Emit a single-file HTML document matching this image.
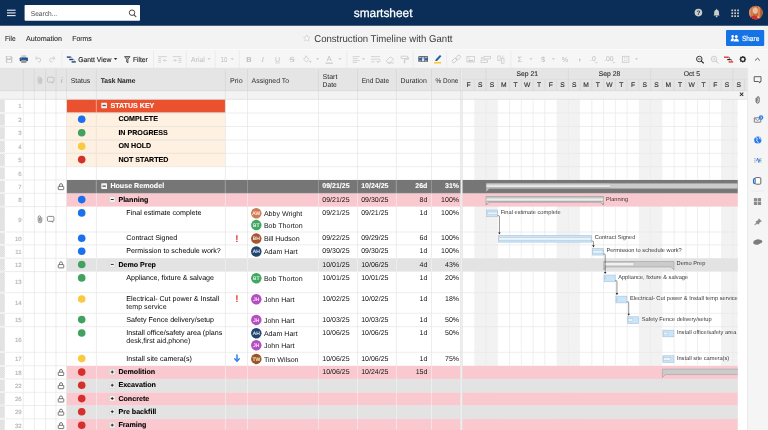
<!DOCTYPE html>
<html lang="en"><head><meta charset="utf-8"><title>Construction Timeline with Gantt - Smartsheet</title>
<style>html,body{margin:0;padding:0;background:#fff;overflow:hidden}body{width:768px;height:430px;font-family:"Liberation Sans",sans-serif}</style>
</head><body>
<svg width="768" height="430" viewBox="0 0 768 430" font-family="'Liberation Sans',sans-serif" text-rendering="geometricPrecision" style="display:block;will-change:transform;opacity:0.9999">
<rect x="0.00" y="0.00" width="768.00" height="430.00" fill="#fff" />
<rect x="0.00" y="25.60" width="768.00" height="24.00" fill="#f3f3f3" />
<rect x="0.00" y="0.00" width="768.00" height="25.75" fill="#0b2e59" />
<rect x="0.00" y="49.60" width="768.00" height="18.70" fill="#f6f6f6" />
<line x1="0.00" y1="49.60" x2="768.00" y2="49.60" stroke="#fbfbfb" stroke-width="0.8" />
<rect x="0.00" y="68.30" width="747.60" height="22.40" fill="#e5e5e5" />
<rect x="0.00" y="90.70" width="747.60" height="8.60" fill="#f3f3f3" />
<rect x="747.60" y="68.30" width="20.40" height="361.70" fill="#f5f5f5" />
<rect x="737.70" y="99.30" width="9.90" height="330.70" fill="#fff" />
<rect x="474.35" y="99.30" width="11.75" height="330.70" fill="#f2f2f2" />
<rect x="486.10" y="99.30" width="11.75" height="330.70" fill="#f2f2f2" />
<rect x="556.60" y="99.30" width="11.75" height="330.70" fill="#f2f2f2" />
<rect x="568.35" y="99.30" width="11.75" height="330.70" fill="#f2f2f2" />
<rect x="638.85" y="99.30" width="11.75" height="330.70" fill="#f2f2f2" />
<rect x="650.60" y="99.30" width="11.75" height="330.70" fill="#f2f2f2" />
<rect x="721.10" y="99.30" width="11.75" height="330.70" fill="#f2f2f2" />
<rect x="732.85" y="99.30" width="4.85" height="330.70" fill="#f2f2f2" />
<rect x="66.50" y="99.30" width="158.90" height="13.70" fill="#e9512f" />
<rect x="66.50" y="113.00" width="158.90" height="53.70" fill="#fef1e1" />
<rect x="66.50" y="179.95" width="671.20" height="13.35" fill="#767676" />
<rect x="66.50" y="193.30" width="671.20" height="13.30" fill="#f9c9cf" />
<rect x="66.50" y="258.20" width="671.20" height="13.40" fill="#e3e3e3" />
<rect x="66.50" y="365.80" width="671.20" height="13.20" fill="#f9c9cf" />
<rect x="66.50" y="379.00" width="671.20" height="13.30" fill="#e3e3e3" />
<rect x="66.50" y="392.30" width="671.20" height="13.20" fill="#f9c9cf" />
<rect x="66.50" y="405.50" width="671.20" height="13.40" fill="#e3e3e3" />
<rect x="66.50" y="418.90" width="671.20" height="13.40" fill="#f9c9cf" />
<defs><pattern id="ht" width="1.6" height="1.6" patternUnits="userSpaceOnUse" patternTransform="rotate(45)"><rect width="1.6" height="1.6" fill="#e9e9e9"/><rect width="0.8" height="1.6" fill="#dcdcdc"/></pattern></defs>
<rect x="0.00" y="100.00" width="4.80" height="12.20" fill="url(#ht)" />
<rect x="0.00" y="113.70" width="4.80" height="12.00" fill="url(#ht)" />
<rect x="0.00" y="127.20" width="4.80" height="12.00" fill="url(#ht)" />
<rect x="0.00" y="140.70" width="4.80" height="11.80" fill="url(#ht)" />
<rect x="0.00" y="154.00" width="4.80" height="11.90" fill="url(#ht)" />
<rect x="0.00" y="167.40" width="4.80" height="11.75" fill="url(#ht)" />
<rect x="0.00" y="180.65" width="4.80" height="11.85" fill="url(#ht)" />
<rect x="0.00" y="194.00" width="4.80" height="11.80" fill="url(#ht)" />
<rect x="0.00" y="207.30" width="4.80" height="23.90" fill="url(#ht)" />
<rect x="0.00" y="232.70" width="4.80" height="11.40" fill="url(#ht)" />
<rect x="0.00" y="245.60" width="4.80" height="11.80" fill="url(#ht)" />
<rect x="0.00" y="258.90" width="4.80" height="11.90" fill="url(#ht)" />
<rect x="0.00" y="272.30" width="4.80" height="19.60" fill="url(#ht)" />
<rect x="0.00" y="293.40" width="4.80" height="19.10" fill="url(#ht)" />
<rect x="0.00" y="314.00" width="4.80" height="11.90" fill="url(#ht)" />
<rect x="0.00" y="327.40" width="4.80" height="24.10" fill="url(#ht)" />
<rect x="0.00" y="353.00" width="4.80" height="12.00" fill="url(#ht)" />
<rect x="0.00" y="366.50" width="4.80" height="11.70" fill="url(#ht)" />
<rect x="0.00" y="379.70" width="4.80" height="11.80" fill="url(#ht)" />
<rect x="0.00" y="393.00" width="4.80" height="11.70" fill="url(#ht)" />
<rect x="0.00" y="406.20" width="4.80" height="11.90" fill="url(#ht)" />
<rect x="0.00" y="419.60" width="4.80" height="11.90" fill="url(#ht)" />
<line x1="0.00" y1="113.00" x2="737.70" y2="113.00" stroke="#e7e7e7" stroke-width="0.75" />
<line x1="0.00" y1="126.50" x2="737.70" y2="126.50" stroke="#e7e7e7" stroke-width="0.75" />
<line x1="0.00" y1="140.00" x2="737.70" y2="140.00" stroke="#e7e7e7" stroke-width="0.75" />
<line x1="0.00" y1="153.30" x2="737.70" y2="153.30" stroke="#e7e7e7" stroke-width="0.75" />
<line x1="0.00" y1="166.70" x2="737.70" y2="166.70" stroke="#e7e7e7" stroke-width="0.75" />
<line x1="0.00" y1="179.95" x2="66.50" y2="179.95" stroke="#e7e7e7" stroke-width="0.75" />
<line x1="0.00" y1="193.30" x2="66.50" y2="193.30" stroke="#e7e7e7" stroke-width="0.75" />
<line x1="66.50" y1="193.30" x2="737.70" y2="193.30" stroke="#a9a0a2" stroke-width="0.5" />
<line x1="0.00" y1="206.60" x2="66.50" y2="206.60" stroke="#e7e7e7" stroke-width="0.75" />
<line x1="0.00" y1="232.00" x2="737.70" y2="232.00" stroke="#e7e7e7" stroke-width="0.75" />
<line x1="0.00" y1="244.90" x2="737.70" y2="244.90" stroke="#e7e7e7" stroke-width="0.75" />
<line x1="0.00" y1="258.20" x2="66.50" y2="258.20" stroke="#e7e7e7" stroke-width="0.75" />
<line x1="0.00" y1="271.60" x2="66.50" y2="271.60" stroke="#e7e7e7" stroke-width="0.75" />
<line x1="0.00" y1="292.70" x2="737.70" y2="292.70" stroke="#e7e7e7" stroke-width="0.75" />
<line x1="0.00" y1="313.30" x2="737.70" y2="313.30" stroke="#e7e7e7" stroke-width="0.75" />
<line x1="0.00" y1="326.70" x2="737.70" y2="326.70" stroke="#e7e7e7" stroke-width="0.75" />
<line x1="0.00" y1="352.30" x2="737.70" y2="352.30" stroke="#e7e7e7" stroke-width="0.75" />
<line x1="0.00" y1="365.80" x2="66.50" y2="365.80" stroke="#e7e7e7" stroke-width="0.75" />
<line x1="0.00" y1="379.00" x2="66.50" y2="379.00" stroke="#e7e7e7" stroke-width="0.75" />
<line x1="66.50" y1="379.00" x2="737.70" y2="379.00" stroke="#efd9dc" stroke-width="0.5" />
<line x1="0.00" y1="392.30" x2="66.50" y2="392.30" stroke="#e7e7e7" stroke-width="0.75" />
<line x1="66.50" y1="392.30" x2="737.70" y2="392.30" stroke="#ecdfe1" stroke-width="0.5" />
<line x1="0.00" y1="405.50" x2="66.50" y2="405.50" stroke="#e7e7e7" stroke-width="0.75" />
<line x1="66.50" y1="405.50" x2="737.70" y2="405.50" stroke="#efd9dc" stroke-width="0.5" />
<line x1="0.00" y1="418.90" x2="66.50" y2="418.90" stroke="#e7e7e7" stroke-width="0.75" />
<line x1="66.50" y1="418.90" x2="737.70" y2="418.90" stroke="#ecdfe1" stroke-width="0.5" />
<line x1="0.00" y1="432.30" x2="66.50" y2="432.30" stroke="#e7e7e7" stroke-width="0.75" />
<line x1="23.20" y1="69.30" x2="23.20" y2="90.70" stroke="#d6d6d6" stroke-width="0.8" />
<line x1="23.20" y1="90.70" x2="23.20" y2="99.30" stroke="#e2e2e2" stroke-width="0.9" />
<line x1="23.20" y1="99.30" x2="23.20" y2="430.00" stroke="#e7e7e7" stroke-width="0.75" />
<line x1="34.30" y1="69.30" x2="34.30" y2="90.70" stroke="#d6d6d6" stroke-width="0.8" />
<line x1="34.30" y1="90.70" x2="34.30" y2="99.30" stroke="#e2e2e2" stroke-width="0.9" />
<line x1="34.30" y1="99.30" x2="34.30" y2="430.00" stroke="#e7e7e7" stroke-width="0.75" />
<line x1="45.60" y1="69.30" x2="45.60" y2="90.70" stroke="#d6d6d6" stroke-width="0.8" />
<line x1="45.60" y1="90.70" x2="45.60" y2="99.30" stroke="#e2e2e2" stroke-width="0.9" />
<line x1="45.60" y1="99.30" x2="45.60" y2="430.00" stroke="#e7e7e7" stroke-width="0.75" />
<line x1="56.00" y1="69.30" x2="56.00" y2="90.70" stroke="#d6d6d6" stroke-width="0.8" />
<line x1="56.00" y1="90.70" x2="56.00" y2="99.30" stroke="#e2e2e2" stroke-width="0.9" />
<line x1="56.00" y1="99.30" x2="56.00" y2="430.00" stroke="#e7e7e7" stroke-width="0.75" />
<line x1="66.50" y1="69.30" x2="66.50" y2="90.70" stroke="#d6d6d6" stroke-width="0.8" />
<line x1="66.50" y1="90.70" x2="66.50" y2="99.30" stroke="#e2e2e2" stroke-width="0.9" />
<line x1="66.50" y1="99.30" x2="66.50" y2="430.00" stroke="#e7e7e7" stroke-width="0.75" />
<line x1="96.40" y1="69.30" x2="96.40" y2="90.70" stroke="#d6d6d6" stroke-width="0.8" />
<line x1="96.40" y1="90.70" x2="96.40" y2="99.30" stroke="#e2e2e2" stroke-width="0.9" />
<line x1="96.40" y1="99.30" x2="96.40" y2="430.00" stroke="#e7e7e7" stroke-width="0.75" />
<line x1="225.40" y1="69.30" x2="225.40" y2="90.70" stroke="#d6d6d6" stroke-width="0.8" />
<line x1="225.40" y1="90.70" x2="225.40" y2="99.30" stroke="#e2e2e2" stroke-width="0.9" />
<line x1="225.40" y1="99.30" x2="225.40" y2="430.00" stroke="#e7e7e7" stroke-width="0.75" />
<line x1="247.50" y1="69.30" x2="247.50" y2="90.70" stroke="#d6d6d6" stroke-width="0.8" />
<line x1="247.50" y1="90.70" x2="247.50" y2="99.30" stroke="#e2e2e2" stroke-width="0.9" />
<line x1="247.50" y1="99.30" x2="247.50" y2="430.00" stroke="#e7e7e7" stroke-width="0.75" />
<line x1="318.50" y1="69.30" x2="318.50" y2="90.70" stroke="#d6d6d6" stroke-width="0.8" />
<line x1="318.50" y1="90.70" x2="318.50" y2="99.30" stroke="#e2e2e2" stroke-width="0.9" />
<line x1="318.50" y1="99.30" x2="318.50" y2="430.00" stroke="#e7e7e7" stroke-width="0.75" />
<line x1="357.50" y1="69.30" x2="357.50" y2="90.70" stroke="#d6d6d6" stroke-width="0.8" />
<line x1="357.50" y1="90.70" x2="357.50" y2="99.30" stroke="#e2e2e2" stroke-width="0.9" />
<line x1="357.50" y1="99.30" x2="357.50" y2="430.00" stroke="#e7e7e7" stroke-width="0.75" />
<line x1="396.40" y1="69.30" x2="396.40" y2="90.70" stroke="#d6d6d6" stroke-width="0.8" />
<line x1="396.40" y1="90.70" x2="396.40" y2="99.30" stroke="#e2e2e2" stroke-width="0.9" />
<line x1="396.40" y1="99.30" x2="396.40" y2="430.00" stroke="#e7e7e7" stroke-width="0.75" />
<line x1="431.50" y1="69.30" x2="431.50" y2="90.70" stroke="#d6d6d6" stroke-width="0.8" />
<line x1="431.50" y1="90.70" x2="431.50" y2="99.30" stroke="#e2e2e2" stroke-width="0.9" />
<line x1="431.50" y1="99.30" x2="431.50" y2="430.00" stroke="#e7e7e7" stroke-width="0.75" />
<line x1="460.60" y1="69.30" x2="460.60" y2="90.70" stroke="#d6d6d6" stroke-width="0.8" />
<line x1="460.60" y1="90.70" x2="460.60" y2="99.30" stroke="#e2e2e2" stroke-width="0.9" />
<line x1="460.60" y1="99.30" x2="460.60" y2="430.00" stroke="#e7e7e7" stroke-width="0.75" />
<line x1="96.40" y1="418.90" x2="96.40" y2="432.30" stroke="#fbdfe3" stroke-width="0.9" />
<line x1="225.40" y1="418.90" x2="225.40" y2="432.30" stroke="#fbdfe3" stroke-width="0.9" />
<line x1="247.50" y1="418.90" x2="247.50" y2="432.30" stroke="#fbdfe3" stroke-width="0.9" />
<line x1="318.50" y1="418.90" x2="318.50" y2="432.30" stroke="#fbdfe3" stroke-width="0.9" />
<line x1="357.50" y1="418.90" x2="357.50" y2="432.30" stroke="#fbdfe3" stroke-width="0.9" />
<line x1="396.40" y1="418.90" x2="396.40" y2="432.30" stroke="#fbdfe3" stroke-width="0.9" />
<line x1="431.50" y1="418.90" x2="431.50" y2="432.30" stroke="#fbdfe3" stroke-width="0.9" />
<line x1="460.60" y1="418.90" x2="460.60" y2="432.30" stroke="#fbdfe3" stroke-width="0.9" />
<line x1="96.40" y1="392.30" x2="96.40" y2="405.50" stroke="#fbdfe3" stroke-width="0.9" />
<line x1="225.40" y1="392.30" x2="225.40" y2="405.50" stroke="#fbdfe3" stroke-width="0.9" />
<line x1="247.50" y1="392.30" x2="247.50" y2="405.50" stroke="#fbdfe3" stroke-width="0.9" />
<line x1="318.50" y1="392.30" x2="318.50" y2="405.50" stroke="#fbdfe3" stroke-width="0.9" />
<line x1="357.50" y1="392.30" x2="357.50" y2="405.50" stroke="#fbdfe3" stroke-width="0.9" />
<line x1="396.40" y1="392.30" x2="396.40" y2="405.50" stroke="#fbdfe3" stroke-width="0.9" />
<line x1="431.50" y1="392.30" x2="431.50" y2="405.50" stroke="#fbdfe3" stroke-width="0.9" />
<line x1="460.60" y1="392.30" x2="460.60" y2="405.50" stroke="#fbdfe3" stroke-width="0.9" />
<line x1="96.40" y1="365.80" x2="96.40" y2="379.00" stroke="#fbdfe3" stroke-width="0.9" />
<line x1="225.40" y1="365.80" x2="225.40" y2="379.00" stroke="#fbdfe3" stroke-width="0.9" />
<line x1="247.50" y1="365.80" x2="247.50" y2="379.00" stroke="#fbdfe3" stroke-width="0.9" />
<line x1="318.50" y1="365.80" x2="318.50" y2="379.00" stroke="#fbdfe3" stroke-width="0.9" />
<line x1="357.50" y1="365.80" x2="357.50" y2="379.00" stroke="#fbdfe3" stroke-width="0.9" />
<line x1="396.40" y1="365.80" x2="396.40" y2="379.00" stroke="#fbdfe3" stroke-width="0.9" />
<line x1="431.50" y1="365.80" x2="431.50" y2="379.00" stroke="#fbdfe3" stroke-width="0.9" />
<line x1="460.60" y1="365.80" x2="460.60" y2="379.00" stroke="#fbdfe3" stroke-width="0.9" />
<line x1="96.40" y1="193.30" x2="96.40" y2="206.60" stroke="#fbdfe3" stroke-width="0.9" />
<line x1="225.40" y1="193.30" x2="225.40" y2="206.60" stroke="#fbdfe3" stroke-width="0.9" />
<line x1="247.50" y1="193.30" x2="247.50" y2="206.60" stroke="#fbdfe3" stroke-width="0.9" />
<line x1="318.50" y1="193.30" x2="318.50" y2="206.60" stroke="#fbdfe3" stroke-width="0.9" />
<line x1="357.50" y1="193.30" x2="357.50" y2="206.60" stroke="#fbdfe3" stroke-width="0.9" />
<line x1="396.40" y1="193.30" x2="396.40" y2="206.60" stroke="#fbdfe3" stroke-width="0.9" />
<line x1="431.50" y1="193.30" x2="431.50" y2="206.60" stroke="#fbdfe3" stroke-width="0.9" />
<line x1="460.60" y1="193.30" x2="460.60" y2="206.60" stroke="#fbdfe3" stroke-width="0.9" />
<line x1="96.40" y1="379.00" x2="96.40" y2="392.30" stroke="#eeeeee" stroke-width="0.9" />
<line x1="225.40" y1="379.00" x2="225.40" y2="392.30" stroke="#eeeeee" stroke-width="0.9" />
<line x1="247.50" y1="379.00" x2="247.50" y2="392.30" stroke="#eeeeee" stroke-width="0.9" />
<line x1="318.50" y1="379.00" x2="318.50" y2="392.30" stroke="#eeeeee" stroke-width="0.9" />
<line x1="357.50" y1="379.00" x2="357.50" y2="392.30" stroke="#eeeeee" stroke-width="0.9" />
<line x1="396.40" y1="379.00" x2="396.40" y2="392.30" stroke="#eeeeee" stroke-width="0.9" />
<line x1="431.50" y1="379.00" x2="431.50" y2="392.30" stroke="#eeeeee" stroke-width="0.9" />
<line x1="460.60" y1="379.00" x2="460.60" y2="392.30" stroke="#eeeeee" stroke-width="0.9" />
<line x1="96.40" y1="179.95" x2="96.40" y2="193.30" stroke="#8c8c8c" stroke-width="0.9" />
<line x1="225.40" y1="179.95" x2="225.40" y2="193.30" stroke="#8c8c8c" stroke-width="0.9" />
<line x1="247.50" y1="179.95" x2="247.50" y2="193.30" stroke="#8c8c8c" stroke-width="0.9" />
<line x1="318.50" y1="179.95" x2="318.50" y2="193.30" stroke="#8c8c8c" stroke-width="0.9" />
<line x1="357.50" y1="179.95" x2="357.50" y2="193.30" stroke="#8c8c8c" stroke-width="0.9" />
<line x1="396.40" y1="179.95" x2="396.40" y2="193.30" stroke="#8c8c8c" stroke-width="0.9" />
<line x1="431.50" y1="179.95" x2="431.50" y2="193.30" stroke="#8c8c8c" stroke-width="0.9" />
<line x1="460.60" y1="179.95" x2="460.60" y2="193.30" stroke="#8c8c8c" stroke-width="0.9" />
<line x1="96.40" y1="405.50" x2="96.40" y2="418.90" stroke="#eeeeee" stroke-width="0.9" />
<line x1="225.40" y1="405.50" x2="225.40" y2="418.90" stroke="#eeeeee" stroke-width="0.9" />
<line x1="247.50" y1="405.50" x2="247.50" y2="418.90" stroke="#eeeeee" stroke-width="0.9" />
<line x1="318.50" y1="405.50" x2="318.50" y2="418.90" stroke="#eeeeee" stroke-width="0.9" />
<line x1="357.50" y1="405.50" x2="357.50" y2="418.90" stroke="#eeeeee" stroke-width="0.9" />
<line x1="396.40" y1="405.50" x2="396.40" y2="418.90" stroke="#eeeeee" stroke-width="0.9" />
<line x1="431.50" y1="405.50" x2="431.50" y2="418.90" stroke="#eeeeee" stroke-width="0.9" />
<line x1="460.60" y1="405.50" x2="460.60" y2="418.90" stroke="#eeeeee" stroke-width="0.9" />
<line x1="96.40" y1="258.20" x2="96.40" y2="271.60" stroke="#eeeeee" stroke-width="0.9" />
<line x1="225.40" y1="258.20" x2="225.40" y2="271.60" stroke="#eeeeee" stroke-width="0.9" />
<line x1="247.50" y1="258.20" x2="247.50" y2="271.60" stroke="#eeeeee" stroke-width="0.9" />
<line x1="318.50" y1="258.20" x2="318.50" y2="271.60" stroke="#eeeeee" stroke-width="0.9" />
<line x1="357.50" y1="258.20" x2="357.50" y2="271.60" stroke="#eeeeee" stroke-width="0.9" />
<line x1="396.40" y1="258.20" x2="396.40" y2="271.60" stroke="#eeeeee" stroke-width="0.9" />
<line x1="431.50" y1="258.20" x2="431.50" y2="271.60" stroke="#eeeeee" stroke-width="0.9" />
<line x1="460.60" y1="258.20" x2="460.60" y2="271.60" stroke="#eeeeee" stroke-width="0.9" />
<line x1="96.40" y1="99.30" x2="96.40" y2="113.00" stroke="#f08a72" stroke-width="0.9" />
<line x1="66.50" y1="113.00" x2="225.40" y2="113.00" stroke="#efe5d8" stroke-width="0.9" />
<line x1="66.50" y1="126.50" x2="225.40" y2="126.50" stroke="#efe5d8" stroke-width="0.9" />
<line x1="66.50" y1="140.00" x2="225.40" y2="140.00" stroke="#efe5d8" stroke-width="0.9" />
<line x1="66.50" y1="153.30" x2="225.40" y2="153.30" stroke="#efe5d8" stroke-width="0.9" />
<line x1="96.40" y1="113.00" x2="96.40" y2="166.70" stroke="#efe5d8" stroke-width="0.9" />
<rect x="460.60" y="68.30" width="2.00" height="361.70" fill="#e0e0e0" />
<line x1="461.60" y1="68.30" x2="461.60" y2="430.00" stroke="#f7f7f7" stroke-width="0.7" />
<line x1="486.10" y1="99.30" x2="486.10" y2="113.00" stroke="#e9e9e9" stroke-width="0.75" />
<line x1="509.60" y1="99.30" x2="509.60" y2="113.00" stroke="#e9e9e9" stroke-width="0.75" />
<line x1="521.35" y1="99.30" x2="521.35" y2="113.00" stroke="#e9e9e9" stroke-width="0.75" />
<line x1="533.10" y1="99.30" x2="533.10" y2="113.00" stroke="#e9e9e9" stroke-width="0.75" />
<line x1="544.85" y1="99.30" x2="544.85" y2="113.00" stroke="#e9e9e9" stroke-width="0.75" />
<line x1="568.35" y1="99.30" x2="568.35" y2="113.00" stroke="#e9e9e9" stroke-width="0.75" />
<line x1="591.85" y1="99.30" x2="591.85" y2="113.00" stroke="#e9e9e9" stroke-width="0.75" />
<line x1="603.60" y1="99.30" x2="603.60" y2="113.00" stroke="#e9e9e9" stroke-width="0.75" />
<line x1="615.35" y1="99.30" x2="615.35" y2="113.00" stroke="#e9e9e9" stroke-width="0.75" />
<line x1="627.10" y1="99.30" x2="627.10" y2="113.00" stroke="#e9e9e9" stroke-width="0.75" />
<line x1="650.60" y1="99.30" x2="650.60" y2="113.00" stroke="#e9e9e9" stroke-width="0.75" />
<line x1="674.10" y1="99.30" x2="674.10" y2="113.00" stroke="#e9e9e9" stroke-width="0.75" />
<line x1="685.85" y1="99.30" x2="685.85" y2="113.00" stroke="#e9e9e9" stroke-width="0.75" />
<line x1="697.60" y1="99.30" x2="697.60" y2="113.00" stroke="#e9e9e9" stroke-width="0.75" />
<line x1="709.35" y1="99.30" x2="709.35" y2="113.00" stroke="#e9e9e9" stroke-width="0.75" />
<line x1="732.85" y1="99.30" x2="732.85" y2="113.00" stroke="#e9e9e9" stroke-width="0.75" />
<line x1="486.10" y1="113.00" x2="486.10" y2="126.50" stroke="#e9e9e9" stroke-width="0.75" />
<line x1="509.60" y1="113.00" x2="509.60" y2="126.50" stroke="#e9e9e9" stroke-width="0.75" />
<line x1="521.35" y1="113.00" x2="521.35" y2="126.50" stroke="#e9e9e9" stroke-width="0.75" />
<line x1="533.10" y1="113.00" x2="533.10" y2="126.50" stroke="#e9e9e9" stroke-width="0.75" />
<line x1="544.85" y1="113.00" x2="544.85" y2="126.50" stroke="#e9e9e9" stroke-width="0.75" />
<line x1="568.35" y1="113.00" x2="568.35" y2="126.50" stroke="#e9e9e9" stroke-width="0.75" />
<line x1="591.85" y1="113.00" x2="591.85" y2="126.50" stroke="#e9e9e9" stroke-width="0.75" />
<line x1="603.60" y1="113.00" x2="603.60" y2="126.50" stroke="#e9e9e9" stroke-width="0.75" />
<line x1="615.35" y1="113.00" x2="615.35" y2="126.50" stroke="#e9e9e9" stroke-width="0.75" />
<line x1="627.10" y1="113.00" x2="627.10" y2="126.50" stroke="#e9e9e9" stroke-width="0.75" />
<line x1="650.60" y1="113.00" x2="650.60" y2="126.50" stroke="#e9e9e9" stroke-width="0.75" />
<line x1="674.10" y1="113.00" x2="674.10" y2="126.50" stroke="#e9e9e9" stroke-width="0.75" />
<line x1="685.85" y1="113.00" x2="685.85" y2="126.50" stroke="#e9e9e9" stroke-width="0.75" />
<line x1="697.60" y1="113.00" x2="697.60" y2="126.50" stroke="#e9e9e9" stroke-width="0.75" />
<line x1="709.35" y1="113.00" x2="709.35" y2="126.50" stroke="#e9e9e9" stroke-width="0.75" />
<line x1="732.85" y1="113.00" x2="732.85" y2="126.50" stroke="#e9e9e9" stroke-width="0.75" />
<line x1="486.10" y1="126.50" x2="486.10" y2="140.00" stroke="#e9e9e9" stroke-width="0.75" />
<line x1="509.60" y1="126.50" x2="509.60" y2="140.00" stroke="#e9e9e9" stroke-width="0.75" />
<line x1="521.35" y1="126.50" x2="521.35" y2="140.00" stroke="#e9e9e9" stroke-width="0.75" />
<line x1="533.10" y1="126.50" x2="533.10" y2="140.00" stroke="#e9e9e9" stroke-width="0.75" />
<line x1="544.85" y1="126.50" x2="544.85" y2="140.00" stroke="#e9e9e9" stroke-width="0.75" />
<line x1="568.35" y1="126.50" x2="568.35" y2="140.00" stroke="#e9e9e9" stroke-width="0.75" />
<line x1="591.85" y1="126.50" x2="591.85" y2="140.00" stroke="#e9e9e9" stroke-width="0.75" />
<line x1="603.60" y1="126.50" x2="603.60" y2="140.00" stroke="#e9e9e9" stroke-width="0.75" />
<line x1="615.35" y1="126.50" x2="615.35" y2="140.00" stroke="#e9e9e9" stroke-width="0.75" />
<line x1="627.10" y1="126.50" x2="627.10" y2="140.00" stroke="#e9e9e9" stroke-width="0.75" />
<line x1="650.60" y1="126.50" x2="650.60" y2="140.00" stroke="#e9e9e9" stroke-width="0.75" />
<line x1="674.10" y1="126.50" x2="674.10" y2="140.00" stroke="#e9e9e9" stroke-width="0.75" />
<line x1="685.85" y1="126.50" x2="685.85" y2="140.00" stroke="#e9e9e9" stroke-width="0.75" />
<line x1="697.60" y1="126.50" x2="697.60" y2="140.00" stroke="#e9e9e9" stroke-width="0.75" />
<line x1="709.35" y1="126.50" x2="709.35" y2="140.00" stroke="#e9e9e9" stroke-width="0.75" />
<line x1="732.85" y1="126.50" x2="732.85" y2="140.00" stroke="#e9e9e9" stroke-width="0.75" />
<line x1="486.10" y1="140.00" x2="486.10" y2="153.30" stroke="#e9e9e9" stroke-width="0.75" />
<line x1="509.60" y1="140.00" x2="509.60" y2="153.30" stroke="#e9e9e9" stroke-width="0.75" />
<line x1="521.35" y1="140.00" x2="521.35" y2="153.30" stroke="#e9e9e9" stroke-width="0.75" />
<line x1="533.10" y1="140.00" x2="533.10" y2="153.30" stroke="#e9e9e9" stroke-width="0.75" />
<line x1="544.85" y1="140.00" x2="544.85" y2="153.30" stroke="#e9e9e9" stroke-width="0.75" />
<line x1="568.35" y1="140.00" x2="568.35" y2="153.30" stroke="#e9e9e9" stroke-width="0.75" />
<line x1="591.85" y1="140.00" x2="591.85" y2="153.30" stroke="#e9e9e9" stroke-width="0.75" />
<line x1="603.60" y1="140.00" x2="603.60" y2="153.30" stroke="#e9e9e9" stroke-width="0.75" />
<line x1="615.35" y1="140.00" x2="615.35" y2="153.30" stroke="#e9e9e9" stroke-width="0.75" />
<line x1="627.10" y1="140.00" x2="627.10" y2="153.30" stroke="#e9e9e9" stroke-width="0.75" />
<line x1="650.60" y1="140.00" x2="650.60" y2="153.30" stroke="#e9e9e9" stroke-width="0.75" />
<line x1="674.10" y1="140.00" x2="674.10" y2="153.30" stroke="#e9e9e9" stroke-width="0.75" />
<line x1="685.85" y1="140.00" x2="685.85" y2="153.30" stroke="#e9e9e9" stroke-width="0.75" />
<line x1="697.60" y1="140.00" x2="697.60" y2="153.30" stroke="#e9e9e9" stroke-width="0.75" />
<line x1="709.35" y1="140.00" x2="709.35" y2="153.30" stroke="#e9e9e9" stroke-width="0.75" />
<line x1="732.85" y1="140.00" x2="732.85" y2="153.30" stroke="#e9e9e9" stroke-width="0.75" />
<line x1="486.10" y1="153.30" x2="486.10" y2="166.70" stroke="#e9e9e9" stroke-width="0.75" />
<line x1="509.60" y1="153.30" x2="509.60" y2="166.70" stroke="#e9e9e9" stroke-width="0.75" />
<line x1="521.35" y1="153.30" x2="521.35" y2="166.70" stroke="#e9e9e9" stroke-width="0.75" />
<line x1="533.10" y1="153.30" x2="533.10" y2="166.70" stroke="#e9e9e9" stroke-width="0.75" />
<line x1="544.85" y1="153.30" x2="544.85" y2="166.70" stroke="#e9e9e9" stroke-width="0.75" />
<line x1="568.35" y1="153.30" x2="568.35" y2="166.70" stroke="#e9e9e9" stroke-width="0.75" />
<line x1="591.85" y1="153.30" x2="591.85" y2="166.70" stroke="#e9e9e9" stroke-width="0.75" />
<line x1="603.60" y1="153.30" x2="603.60" y2="166.70" stroke="#e9e9e9" stroke-width="0.75" />
<line x1="615.35" y1="153.30" x2="615.35" y2="166.70" stroke="#e9e9e9" stroke-width="0.75" />
<line x1="627.10" y1="153.30" x2="627.10" y2="166.70" stroke="#e9e9e9" stroke-width="0.75" />
<line x1="650.60" y1="153.30" x2="650.60" y2="166.70" stroke="#e9e9e9" stroke-width="0.75" />
<line x1="674.10" y1="153.30" x2="674.10" y2="166.70" stroke="#e9e9e9" stroke-width="0.75" />
<line x1="685.85" y1="153.30" x2="685.85" y2="166.70" stroke="#e9e9e9" stroke-width="0.75" />
<line x1="697.60" y1="153.30" x2="697.60" y2="166.70" stroke="#e9e9e9" stroke-width="0.75" />
<line x1="709.35" y1="153.30" x2="709.35" y2="166.70" stroke="#e9e9e9" stroke-width="0.75" />
<line x1="732.85" y1="153.30" x2="732.85" y2="166.70" stroke="#e9e9e9" stroke-width="0.75" />
<line x1="486.10" y1="166.70" x2="486.10" y2="179.95" stroke="#e9e9e9" stroke-width="0.75" />
<line x1="509.60" y1="166.70" x2="509.60" y2="179.95" stroke="#e9e9e9" stroke-width="0.75" />
<line x1="521.35" y1="166.70" x2="521.35" y2="179.95" stroke="#e9e9e9" stroke-width="0.75" />
<line x1="533.10" y1="166.70" x2="533.10" y2="179.95" stroke="#e9e9e9" stroke-width="0.75" />
<line x1="544.85" y1="166.70" x2="544.85" y2="179.95" stroke="#e9e9e9" stroke-width="0.75" />
<line x1="568.35" y1="166.70" x2="568.35" y2="179.95" stroke="#e9e9e9" stroke-width="0.75" />
<line x1="591.85" y1="166.70" x2="591.85" y2="179.95" stroke="#e9e9e9" stroke-width="0.75" />
<line x1="603.60" y1="166.70" x2="603.60" y2="179.95" stroke="#e9e9e9" stroke-width="0.75" />
<line x1="615.35" y1="166.70" x2="615.35" y2="179.95" stroke="#e9e9e9" stroke-width="0.75" />
<line x1="627.10" y1="166.70" x2="627.10" y2="179.95" stroke="#e9e9e9" stroke-width="0.75" />
<line x1="650.60" y1="166.70" x2="650.60" y2="179.95" stroke="#e9e9e9" stroke-width="0.75" />
<line x1="674.10" y1="166.70" x2="674.10" y2="179.95" stroke="#e9e9e9" stroke-width="0.75" />
<line x1="685.85" y1="166.70" x2="685.85" y2="179.95" stroke="#e9e9e9" stroke-width="0.75" />
<line x1="697.60" y1="166.70" x2="697.60" y2="179.95" stroke="#e9e9e9" stroke-width="0.75" />
<line x1="709.35" y1="166.70" x2="709.35" y2="179.95" stroke="#e9e9e9" stroke-width="0.75" />
<line x1="732.85" y1="166.70" x2="732.85" y2="179.95" stroke="#e9e9e9" stroke-width="0.75" />
<line x1="486.10" y1="206.60" x2="486.10" y2="232.00" stroke="#e9e9e9" stroke-width="0.75" />
<line x1="509.60" y1="206.60" x2="509.60" y2="232.00" stroke="#e9e9e9" stroke-width="0.75" />
<line x1="521.35" y1="206.60" x2="521.35" y2="232.00" stroke="#e9e9e9" stroke-width="0.75" />
<line x1="533.10" y1="206.60" x2="533.10" y2="232.00" stroke="#e9e9e9" stroke-width="0.75" />
<line x1="544.85" y1="206.60" x2="544.85" y2="232.00" stroke="#e9e9e9" stroke-width="0.75" />
<line x1="568.35" y1="206.60" x2="568.35" y2="232.00" stroke="#e9e9e9" stroke-width="0.75" />
<line x1="591.85" y1="206.60" x2="591.85" y2="232.00" stroke="#e9e9e9" stroke-width="0.75" />
<line x1="603.60" y1="206.60" x2="603.60" y2="232.00" stroke="#e9e9e9" stroke-width="0.75" />
<line x1="615.35" y1="206.60" x2="615.35" y2="232.00" stroke="#e9e9e9" stroke-width="0.75" />
<line x1="627.10" y1="206.60" x2="627.10" y2="232.00" stroke="#e9e9e9" stroke-width="0.75" />
<line x1="650.60" y1="206.60" x2="650.60" y2="232.00" stroke="#e9e9e9" stroke-width="0.75" />
<line x1="674.10" y1="206.60" x2="674.10" y2="232.00" stroke="#e9e9e9" stroke-width="0.75" />
<line x1="685.85" y1="206.60" x2="685.85" y2="232.00" stroke="#e9e9e9" stroke-width="0.75" />
<line x1="697.60" y1="206.60" x2="697.60" y2="232.00" stroke="#e9e9e9" stroke-width="0.75" />
<line x1="709.35" y1="206.60" x2="709.35" y2="232.00" stroke="#e9e9e9" stroke-width="0.75" />
<line x1="732.85" y1="206.60" x2="732.85" y2="232.00" stroke="#e9e9e9" stroke-width="0.75" />
<line x1="486.10" y1="232.00" x2="486.10" y2="244.90" stroke="#e9e9e9" stroke-width="0.75" />
<line x1="509.60" y1="232.00" x2="509.60" y2="244.90" stroke="#e9e9e9" stroke-width="0.75" />
<line x1="521.35" y1="232.00" x2="521.35" y2="244.90" stroke="#e9e9e9" stroke-width="0.75" />
<line x1="533.10" y1="232.00" x2="533.10" y2="244.90" stroke="#e9e9e9" stroke-width="0.75" />
<line x1="544.85" y1="232.00" x2="544.85" y2="244.90" stroke="#e9e9e9" stroke-width="0.75" />
<line x1="568.35" y1="232.00" x2="568.35" y2="244.90" stroke="#e9e9e9" stroke-width="0.75" />
<line x1="591.85" y1="232.00" x2="591.85" y2="244.90" stroke="#e9e9e9" stroke-width="0.75" />
<line x1="603.60" y1="232.00" x2="603.60" y2="244.90" stroke="#e9e9e9" stroke-width="0.75" />
<line x1="615.35" y1="232.00" x2="615.35" y2="244.90" stroke="#e9e9e9" stroke-width="0.75" />
<line x1="627.10" y1="232.00" x2="627.10" y2="244.90" stroke="#e9e9e9" stroke-width="0.75" />
<line x1="650.60" y1="232.00" x2="650.60" y2="244.90" stroke="#e9e9e9" stroke-width="0.75" />
<line x1="674.10" y1="232.00" x2="674.10" y2="244.90" stroke="#e9e9e9" stroke-width="0.75" />
<line x1="685.85" y1="232.00" x2="685.85" y2="244.90" stroke="#e9e9e9" stroke-width="0.75" />
<line x1="697.60" y1="232.00" x2="697.60" y2="244.90" stroke="#e9e9e9" stroke-width="0.75" />
<line x1="709.35" y1="232.00" x2="709.35" y2="244.90" stroke="#e9e9e9" stroke-width="0.75" />
<line x1="732.85" y1="232.00" x2="732.85" y2="244.90" stroke="#e9e9e9" stroke-width="0.75" />
<line x1="486.10" y1="244.90" x2="486.10" y2="258.20" stroke="#e9e9e9" stroke-width="0.75" />
<line x1="509.60" y1="244.90" x2="509.60" y2="258.20" stroke="#e9e9e9" stroke-width="0.75" />
<line x1="521.35" y1="244.90" x2="521.35" y2="258.20" stroke="#e9e9e9" stroke-width="0.75" />
<line x1="533.10" y1="244.90" x2="533.10" y2="258.20" stroke="#e9e9e9" stroke-width="0.75" />
<line x1="544.85" y1="244.90" x2="544.85" y2="258.20" stroke="#e9e9e9" stroke-width="0.75" />
<line x1="568.35" y1="244.90" x2="568.35" y2="258.20" stroke="#e9e9e9" stroke-width="0.75" />
<line x1="591.85" y1="244.90" x2="591.85" y2="258.20" stroke="#e9e9e9" stroke-width="0.75" />
<line x1="603.60" y1="244.90" x2="603.60" y2="258.20" stroke="#e9e9e9" stroke-width="0.75" />
<line x1="615.35" y1="244.90" x2="615.35" y2="258.20" stroke="#e9e9e9" stroke-width="0.75" />
<line x1="627.10" y1="244.90" x2="627.10" y2="258.20" stroke="#e9e9e9" stroke-width="0.75" />
<line x1="650.60" y1="244.90" x2="650.60" y2="258.20" stroke="#e9e9e9" stroke-width="0.75" />
<line x1="674.10" y1="244.90" x2="674.10" y2="258.20" stroke="#e9e9e9" stroke-width="0.75" />
<line x1="685.85" y1="244.90" x2="685.85" y2="258.20" stroke="#e9e9e9" stroke-width="0.75" />
<line x1="697.60" y1="244.90" x2="697.60" y2="258.20" stroke="#e9e9e9" stroke-width="0.75" />
<line x1="709.35" y1="244.90" x2="709.35" y2="258.20" stroke="#e9e9e9" stroke-width="0.75" />
<line x1="732.85" y1="244.90" x2="732.85" y2="258.20" stroke="#e9e9e9" stroke-width="0.75" />
<line x1="486.10" y1="271.60" x2="486.10" y2="292.70" stroke="#e9e9e9" stroke-width="0.75" />
<line x1="509.60" y1="271.60" x2="509.60" y2="292.70" stroke="#e9e9e9" stroke-width="0.75" />
<line x1="521.35" y1="271.60" x2="521.35" y2="292.70" stroke="#e9e9e9" stroke-width="0.75" />
<line x1="533.10" y1="271.60" x2="533.10" y2="292.70" stroke="#e9e9e9" stroke-width="0.75" />
<line x1="544.85" y1="271.60" x2="544.85" y2="292.70" stroke="#e9e9e9" stroke-width="0.75" />
<line x1="568.35" y1="271.60" x2="568.35" y2="292.70" stroke="#e9e9e9" stroke-width="0.75" />
<line x1="591.85" y1="271.60" x2="591.85" y2="292.70" stroke="#e9e9e9" stroke-width="0.75" />
<line x1="603.60" y1="271.60" x2="603.60" y2="292.70" stroke="#e9e9e9" stroke-width="0.75" />
<line x1="615.35" y1="271.60" x2="615.35" y2="292.70" stroke="#e9e9e9" stroke-width="0.75" />
<line x1="627.10" y1="271.60" x2="627.10" y2="292.70" stroke="#e9e9e9" stroke-width="0.75" />
<line x1="650.60" y1="271.60" x2="650.60" y2="292.70" stroke="#e9e9e9" stroke-width="0.75" />
<line x1="674.10" y1="271.60" x2="674.10" y2="292.70" stroke="#e9e9e9" stroke-width="0.75" />
<line x1="685.85" y1="271.60" x2="685.85" y2="292.70" stroke="#e9e9e9" stroke-width="0.75" />
<line x1="697.60" y1="271.60" x2="697.60" y2="292.70" stroke="#e9e9e9" stroke-width="0.75" />
<line x1="709.35" y1="271.60" x2="709.35" y2="292.70" stroke="#e9e9e9" stroke-width="0.75" />
<line x1="732.85" y1="271.60" x2="732.85" y2="292.70" stroke="#e9e9e9" stroke-width="0.75" />
<line x1="486.10" y1="292.70" x2="486.10" y2="313.30" stroke="#e9e9e9" stroke-width="0.75" />
<line x1="509.60" y1="292.70" x2="509.60" y2="313.30" stroke="#e9e9e9" stroke-width="0.75" />
<line x1="521.35" y1="292.70" x2="521.35" y2="313.30" stroke="#e9e9e9" stroke-width="0.75" />
<line x1="533.10" y1="292.70" x2="533.10" y2="313.30" stroke="#e9e9e9" stroke-width="0.75" />
<line x1="544.85" y1="292.70" x2="544.85" y2="313.30" stroke="#e9e9e9" stroke-width="0.75" />
<line x1="568.35" y1="292.70" x2="568.35" y2="313.30" stroke="#e9e9e9" stroke-width="0.75" />
<line x1="591.85" y1="292.70" x2="591.85" y2="313.30" stroke="#e9e9e9" stroke-width="0.75" />
<line x1="603.60" y1="292.70" x2="603.60" y2="313.30" stroke="#e9e9e9" stroke-width="0.75" />
<line x1="615.35" y1="292.70" x2="615.35" y2="313.30" stroke="#e9e9e9" stroke-width="0.75" />
<line x1="627.10" y1="292.70" x2="627.10" y2="313.30" stroke="#e9e9e9" stroke-width="0.75" />
<line x1="650.60" y1="292.70" x2="650.60" y2="313.30" stroke="#e9e9e9" stroke-width="0.75" />
<line x1="674.10" y1="292.70" x2="674.10" y2="313.30" stroke="#e9e9e9" stroke-width="0.75" />
<line x1="685.85" y1="292.70" x2="685.85" y2="313.30" stroke="#e9e9e9" stroke-width="0.75" />
<line x1="697.60" y1="292.70" x2="697.60" y2="313.30" stroke="#e9e9e9" stroke-width="0.75" />
<line x1="709.35" y1="292.70" x2="709.35" y2="313.30" stroke="#e9e9e9" stroke-width="0.75" />
<line x1="732.85" y1="292.70" x2="732.85" y2="313.30" stroke="#e9e9e9" stroke-width="0.75" />
<line x1="486.10" y1="313.30" x2="486.10" y2="326.70" stroke="#e9e9e9" stroke-width="0.75" />
<line x1="509.60" y1="313.30" x2="509.60" y2="326.70" stroke="#e9e9e9" stroke-width="0.75" />
<line x1="521.35" y1="313.30" x2="521.35" y2="326.70" stroke="#e9e9e9" stroke-width="0.75" />
<line x1="533.10" y1="313.30" x2="533.10" y2="326.70" stroke="#e9e9e9" stroke-width="0.75" />
<line x1="544.85" y1="313.30" x2="544.85" y2="326.70" stroke="#e9e9e9" stroke-width="0.75" />
<line x1="568.35" y1="313.30" x2="568.35" y2="326.70" stroke="#e9e9e9" stroke-width="0.75" />
<line x1="591.85" y1="313.30" x2="591.85" y2="326.70" stroke="#e9e9e9" stroke-width="0.75" />
<line x1="603.60" y1="313.30" x2="603.60" y2="326.70" stroke="#e9e9e9" stroke-width="0.75" />
<line x1="615.35" y1="313.30" x2="615.35" y2="326.70" stroke="#e9e9e9" stroke-width="0.75" />
<line x1="627.10" y1="313.30" x2="627.10" y2="326.70" stroke="#e9e9e9" stroke-width="0.75" />
<line x1="650.60" y1="313.30" x2="650.60" y2="326.70" stroke="#e9e9e9" stroke-width="0.75" />
<line x1="674.10" y1="313.30" x2="674.10" y2="326.70" stroke="#e9e9e9" stroke-width="0.75" />
<line x1="685.85" y1="313.30" x2="685.85" y2="326.70" stroke="#e9e9e9" stroke-width="0.75" />
<line x1="697.60" y1="313.30" x2="697.60" y2="326.70" stroke="#e9e9e9" stroke-width="0.75" />
<line x1="709.35" y1="313.30" x2="709.35" y2="326.70" stroke="#e9e9e9" stroke-width="0.75" />
<line x1="732.85" y1="313.30" x2="732.85" y2="326.70" stroke="#e9e9e9" stroke-width="0.75" />
<line x1="486.10" y1="326.70" x2="486.10" y2="352.30" stroke="#e9e9e9" stroke-width="0.75" />
<line x1="509.60" y1="326.70" x2="509.60" y2="352.30" stroke="#e9e9e9" stroke-width="0.75" />
<line x1="521.35" y1="326.70" x2="521.35" y2="352.30" stroke="#e9e9e9" stroke-width="0.75" />
<line x1="533.10" y1="326.70" x2="533.10" y2="352.30" stroke="#e9e9e9" stroke-width="0.75" />
<line x1="544.85" y1="326.70" x2="544.85" y2="352.30" stroke="#e9e9e9" stroke-width="0.75" />
<line x1="568.35" y1="326.70" x2="568.35" y2="352.30" stroke="#e9e9e9" stroke-width="0.75" />
<line x1="591.85" y1="326.70" x2="591.85" y2="352.30" stroke="#e9e9e9" stroke-width="0.75" />
<line x1="603.60" y1="326.70" x2="603.60" y2="352.30" stroke="#e9e9e9" stroke-width="0.75" />
<line x1="615.35" y1="326.70" x2="615.35" y2="352.30" stroke="#e9e9e9" stroke-width="0.75" />
<line x1="627.10" y1="326.70" x2="627.10" y2="352.30" stroke="#e9e9e9" stroke-width="0.75" />
<line x1="650.60" y1="326.70" x2="650.60" y2="352.30" stroke="#e9e9e9" stroke-width="0.75" />
<line x1="674.10" y1="326.70" x2="674.10" y2="352.30" stroke="#e9e9e9" stroke-width="0.75" />
<line x1="685.85" y1="326.70" x2="685.85" y2="352.30" stroke="#e9e9e9" stroke-width="0.75" />
<line x1="697.60" y1="326.70" x2="697.60" y2="352.30" stroke="#e9e9e9" stroke-width="0.75" />
<line x1="709.35" y1="326.70" x2="709.35" y2="352.30" stroke="#e9e9e9" stroke-width="0.75" />
<line x1="732.85" y1="326.70" x2="732.85" y2="352.30" stroke="#e9e9e9" stroke-width="0.75" />
<line x1="486.10" y1="352.30" x2="486.10" y2="365.80" stroke="#e9e9e9" stroke-width="0.75" />
<line x1="509.60" y1="352.30" x2="509.60" y2="365.80" stroke="#e9e9e9" stroke-width="0.75" />
<line x1="521.35" y1="352.30" x2="521.35" y2="365.80" stroke="#e9e9e9" stroke-width="0.75" />
<line x1="533.10" y1="352.30" x2="533.10" y2="365.80" stroke="#e9e9e9" stroke-width="0.75" />
<line x1="544.85" y1="352.30" x2="544.85" y2="365.80" stroke="#e9e9e9" stroke-width="0.75" />
<line x1="568.35" y1="352.30" x2="568.35" y2="365.80" stroke="#e9e9e9" stroke-width="0.75" />
<line x1="591.85" y1="352.30" x2="591.85" y2="365.80" stroke="#e9e9e9" stroke-width="0.75" />
<line x1="603.60" y1="352.30" x2="603.60" y2="365.80" stroke="#e9e9e9" stroke-width="0.75" />
<line x1="615.35" y1="352.30" x2="615.35" y2="365.80" stroke="#e9e9e9" stroke-width="0.75" />
<line x1="627.10" y1="352.30" x2="627.10" y2="365.80" stroke="#e9e9e9" stroke-width="0.75" />
<line x1="650.60" y1="352.30" x2="650.60" y2="365.80" stroke="#e9e9e9" stroke-width="0.75" />
<line x1="674.10" y1="352.30" x2="674.10" y2="365.80" stroke="#e9e9e9" stroke-width="0.75" />
<line x1="685.85" y1="352.30" x2="685.85" y2="365.80" stroke="#e9e9e9" stroke-width="0.75" />
<line x1="697.60" y1="352.30" x2="697.60" y2="365.80" stroke="#e9e9e9" stroke-width="0.75" />
<line x1="709.35" y1="352.30" x2="709.35" y2="365.80" stroke="#e9e9e9" stroke-width="0.75" />
<line x1="732.85" y1="352.30" x2="732.85" y2="365.80" stroke="#e9e9e9" stroke-width="0.75" />
<line x1="462.60" y1="79.40" x2="747.60" y2="79.40" stroke="#dcdcdc" stroke-width="0.8" />
<line x1="474.35" y1="79.40" x2="474.35" y2="90.70" stroke="#d8d8d8" stroke-width="0.8" />
<line x1="486.10" y1="79.40" x2="486.10" y2="90.70" stroke="#d8d8d8" stroke-width="0.8" />
<line x1="497.85" y1="79.40" x2="497.85" y2="90.70" stroke="#d8d8d8" stroke-width="0.8" />
<line x1="509.60" y1="79.40" x2="509.60" y2="90.70" stroke="#d8d8d8" stroke-width="0.8" />
<line x1="521.35" y1="79.40" x2="521.35" y2="90.70" stroke="#d8d8d8" stroke-width="0.8" />
<line x1="533.10" y1="79.40" x2="533.10" y2="90.70" stroke="#d8d8d8" stroke-width="0.8" />
<line x1="544.85" y1="79.40" x2="544.85" y2="90.70" stroke="#d8d8d8" stroke-width="0.8" />
<line x1="556.60" y1="79.40" x2="556.60" y2="90.70" stroke="#d8d8d8" stroke-width="0.8" />
<line x1="568.35" y1="79.40" x2="568.35" y2="90.70" stroke="#d8d8d8" stroke-width="0.8" />
<line x1="580.10" y1="79.40" x2="580.10" y2="90.70" stroke="#d8d8d8" stroke-width="0.8" />
<line x1="591.85" y1="79.40" x2="591.85" y2="90.70" stroke="#d8d8d8" stroke-width="0.8" />
<line x1="603.60" y1="79.40" x2="603.60" y2="90.70" stroke="#d8d8d8" stroke-width="0.8" />
<line x1="615.35" y1="79.40" x2="615.35" y2="90.70" stroke="#d8d8d8" stroke-width="0.8" />
<line x1="627.10" y1="79.40" x2="627.10" y2="90.70" stroke="#d8d8d8" stroke-width="0.8" />
<line x1="638.85" y1="79.40" x2="638.85" y2="90.70" stroke="#d8d8d8" stroke-width="0.8" />
<line x1="650.60" y1="79.40" x2="650.60" y2="90.70" stroke="#d8d8d8" stroke-width="0.8" />
<line x1="662.35" y1="79.40" x2="662.35" y2="90.70" stroke="#d8d8d8" stroke-width="0.8" />
<line x1="674.10" y1="79.40" x2="674.10" y2="90.70" stroke="#d8d8d8" stroke-width="0.8" />
<line x1="685.85" y1="79.40" x2="685.85" y2="90.70" stroke="#d8d8d8" stroke-width="0.8" />
<line x1="697.60" y1="79.40" x2="697.60" y2="90.70" stroke="#d8d8d8" stroke-width="0.8" />
<line x1="709.35" y1="79.40" x2="709.35" y2="90.70" stroke="#d8d8d8" stroke-width="0.8" />
<line x1="721.10" y1="79.40" x2="721.10" y2="90.70" stroke="#d8d8d8" stroke-width="0.8" />
<line x1="732.85" y1="79.40" x2="732.85" y2="90.70" stroke="#d8d8d8" stroke-width="0.8" />
<line x1="744.60" y1="79.40" x2="744.60" y2="90.70" stroke="#d8d8d8" stroke-width="0.8" />
<line x1="486.10" y1="68.30" x2="486.10" y2="79.40" stroke="#d8d8d8" stroke-width="0.8" />
<line x1="568.35" y1="68.30" x2="568.35" y2="79.40" stroke="#d8d8d8" stroke-width="0.8" />
<line x1="650.60" y1="68.30" x2="650.60" y2="79.40" stroke="#d8d8d8" stroke-width="0.8" />
<line x1="732.85" y1="68.30" x2="732.85" y2="79.40" stroke="#d8d8d8" stroke-width="0.8" />
<line x1="0.00" y1="90.70" x2="747.60" y2="90.70" stroke="#d4d4d4" stroke-width="0.8" />
<line x1="0.00" y1="99.30" x2="747.60" y2="99.30" stroke="#dedede" stroke-width="0.8" />
<line x1="0.00" y1="68.30" x2="747.60" y2="68.30" stroke="#dcdcdc" stroke-width="0.6" />
<line x1="747.60" y1="68.30" x2="747.60" y2="430.00" stroke="#e6e6e6" stroke-width="0.8" />
<text x="70.70" y="83.00" font-size="7" fill="#2b2b2b" textLength="19.60" lengthAdjust="spacingAndGlyphs" >Status</text>
<text x="100.80" y="83.00" font-size="7" fill="#1a1a1a" font-weight="bold" textLength="34.60" lengthAdjust="spacingAndGlyphs" >Task Name</text>
<text x="230.00" y="83.00" font-size="7" fill="#2b2b2b" textLength="12.60" lengthAdjust="spacingAndGlyphs" >Prio</text>
<text x="251.60" y="83.00" font-size="7" fill="#2b2b2b" textLength="37.60" lengthAdjust="spacingAndGlyphs" >Assigned To</text>
<text x="322.60" y="78.60" font-size="7" fill="#2b2b2b" textLength="14.80" lengthAdjust="spacingAndGlyphs" >Start</text>
<text x="322.60" y="86.80" font-size="7" fill="#2b2b2b" textLength="14.20" lengthAdjust="spacingAndGlyphs" >Date</text>
<text x="361.70" y="83.00" font-size="7" fill="#2b2b2b" textLength="27.40" lengthAdjust="spacingAndGlyphs" >End Date</text>
<text x="400.60" y="83.00" font-size="7" fill="#2b2b2b" textLength="26.20" lengthAdjust="spacingAndGlyphs" >Duration</text>
<text x="435.50" y="83.00" font-size="7" fill="#2b2b2b" textLength="22.80" lengthAdjust="spacingAndGlyphs" >% Done</text>
<text x="468.48" y="87.10" font-size="6.7" fill="#2e2e2e" text-anchor="middle" stroke="#2e2e2e" stroke-width="0.12">F</text>
<text x="480.23" y="87.10" font-size="6.7" fill="#2e2e2e" text-anchor="middle" stroke="#2e2e2e" stroke-width="0.12">S</text>
<text x="491.98" y="87.10" font-size="6.7" fill="#2e2e2e" text-anchor="middle" stroke="#2e2e2e" stroke-width="0.12">S</text>
<text x="503.73" y="87.10" font-size="6.7" fill="#2e2e2e" text-anchor="middle" stroke="#2e2e2e" stroke-width="0.12">M</text>
<text x="515.48" y="87.10" font-size="6.7" fill="#2e2e2e" text-anchor="middle" stroke="#2e2e2e" stroke-width="0.12">T</text>
<text x="527.23" y="87.10" font-size="6.7" fill="#2e2e2e" text-anchor="middle" stroke="#2e2e2e" stroke-width="0.12">W</text>
<text x="538.98" y="87.10" font-size="6.7" fill="#2e2e2e" text-anchor="middle" stroke="#2e2e2e" stroke-width="0.12">T</text>
<text x="550.73" y="87.10" font-size="6.7" fill="#2e2e2e" text-anchor="middle" stroke="#2e2e2e" stroke-width="0.12">F</text>
<text x="562.48" y="87.10" font-size="6.7" fill="#2e2e2e" text-anchor="middle" stroke="#2e2e2e" stroke-width="0.12">S</text>
<text x="574.23" y="87.10" font-size="6.7" fill="#2e2e2e" text-anchor="middle" stroke="#2e2e2e" stroke-width="0.12">S</text>
<text x="585.98" y="87.10" font-size="6.7" fill="#2e2e2e" text-anchor="middle" stroke="#2e2e2e" stroke-width="0.12">M</text>
<text x="597.73" y="87.10" font-size="6.7" fill="#2e2e2e" text-anchor="middle" stroke="#2e2e2e" stroke-width="0.12">T</text>
<text x="609.48" y="87.10" font-size="6.7" fill="#2e2e2e" text-anchor="middle" stroke="#2e2e2e" stroke-width="0.12">W</text>
<text x="621.23" y="87.10" font-size="6.7" fill="#2e2e2e" text-anchor="middle" stroke="#2e2e2e" stroke-width="0.12">T</text>
<text x="632.98" y="87.10" font-size="6.7" fill="#2e2e2e" text-anchor="middle" stroke="#2e2e2e" stroke-width="0.12">F</text>
<text x="644.73" y="87.10" font-size="6.7" fill="#2e2e2e" text-anchor="middle" stroke="#2e2e2e" stroke-width="0.12">S</text>
<text x="656.48" y="87.10" font-size="6.7" fill="#2e2e2e" text-anchor="middle" stroke="#2e2e2e" stroke-width="0.12">S</text>
<text x="668.23" y="87.10" font-size="6.7" fill="#2e2e2e" text-anchor="middle" stroke="#2e2e2e" stroke-width="0.12">M</text>
<text x="679.98" y="87.10" font-size="6.7" fill="#2e2e2e" text-anchor="middle" stroke="#2e2e2e" stroke-width="0.12">T</text>
<text x="691.73" y="87.10" font-size="6.7" fill="#2e2e2e" text-anchor="middle" stroke="#2e2e2e" stroke-width="0.12">W</text>
<text x="703.48" y="87.10" font-size="6.7" fill="#2e2e2e" text-anchor="middle" stroke="#2e2e2e" stroke-width="0.12">T</text>
<text x="715.23" y="87.10" font-size="6.7" fill="#2e2e2e" text-anchor="middle" stroke="#2e2e2e" stroke-width="0.12">F</text>
<text x="726.98" y="87.10" font-size="6.7" fill="#2e2e2e" text-anchor="middle" stroke="#2e2e2e" stroke-width="0.12">S</text>
<text x="738.73" y="87.10" font-size="6.7" fill="#2e2e2e" text-anchor="middle" stroke="#2e2e2e" stroke-width="0.12">S</text>
<text x="527.20" y="76.30" font-size="6.8" fill="#2e2e2e" text-anchor="middle" stroke="#2e2e2e" stroke-width="0.1">Sep 21</text>
<text x="609.50" y="76.30" font-size="6.8" fill="#2e2e2e" text-anchor="middle" stroke="#2e2e2e" stroke-width="0.1">Sep 28</text>
<text x="691.80" y="76.30" font-size="6.8" fill="#2e2e2e" text-anchor="middle" stroke="#2e2e2e" stroke-width="0.1">Oct 5</text>
<text x="741.60" y="97.40" font-size="8" fill="#222" font-weight="bold" text-anchor="middle" >×</text>
<text x="21.60" y="108.35" font-size="6.0" fill="#b2b2b2" text-anchor="end" stroke="#bdbdbd" stroke-width="0.18">1</text>
<text x="21.60" y="121.95" font-size="6.0" fill="#b2b2b2" text-anchor="end" stroke="#bdbdbd" stroke-width="0.18">2</text>
<text x="21.60" y="135.45" font-size="6.0" fill="#b2b2b2" text-anchor="end" stroke="#bdbdbd" stroke-width="0.18">3</text>
<text x="21.60" y="148.85" font-size="6.0" fill="#b2b2b2" text-anchor="end" stroke="#bdbdbd" stroke-width="0.18">4</text>
<text x="21.60" y="162.20" font-size="6.0" fill="#b2b2b2" text-anchor="end" stroke="#bdbdbd" stroke-width="0.18">5</text>
<text x="21.60" y="175.52" font-size="6.0" fill="#b2b2b2" text-anchor="end" stroke="#bdbdbd" stroke-width="0.18">6</text>
<text x="21.60" y="188.82" font-size="6.0" fill="#b2b2b2" text-anchor="end" stroke="#bdbdbd" stroke-width="0.18">7</text>
<text x="21.60" y="202.15" font-size="6.0" fill="#b2b2b2" text-anchor="end" stroke="#bdbdbd" stroke-width="0.18">8</text>
<text x="21.60" y="221.50" font-size="6.0" fill="#b2b2b2" text-anchor="end" stroke="#bdbdbd" stroke-width="0.18">9</text>
<text x="21.60" y="240.65" font-size="6.0" fill="#b2b2b2" text-anchor="end" stroke="#bdbdbd" stroke-width="0.18">10</text>
<text x="21.60" y="253.75" font-size="6.0" fill="#b2b2b2" text-anchor="end" stroke="#bdbdbd" stroke-width="0.18">11</text>
<text x="21.60" y="267.10" font-size="6.0" fill="#b2b2b2" text-anchor="end" stroke="#bdbdbd" stroke-width="0.18">12</text>
<text x="21.60" y="284.35" font-size="6.0" fill="#b2b2b2" text-anchor="end" stroke="#bdbdbd" stroke-width="0.18">13</text>
<text x="21.60" y="305.20" font-size="6.0" fill="#b2b2b2" text-anchor="end" stroke="#bdbdbd" stroke-width="0.18">14</text>
<text x="21.60" y="322.20" font-size="6.0" fill="#b2b2b2" text-anchor="end" stroke="#bdbdbd" stroke-width="0.18">15</text>
<text x="21.60" y="341.70" font-size="6.0" fill="#b2b2b2" text-anchor="end" stroke="#bdbdbd" stroke-width="0.18">16</text>
<text x="21.60" y="361.25" font-size="6.0" fill="#b2b2b2" text-anchor="end" stroke="#bdbdbd" stroke-width="0.18">17</text>
<text x="21.60" y="374.60" font-size="6.0" fill="#b2b2b2" text-anchor="end" stroke="#bdbdbd" stroke-width="0.18">18</text>
<text x="21.60" y="387.85" font-size="6.0" fill="#b2b2b2" text-anchor="end" stroke="#bdbdbd" stroke-width="0.18">22</text>
<text x="21.60" y="401.10" font-size="6.0" fill="#b2b2b2" text-anchor="end" stroke="#bdbdbd" stroke-width="0.18">26</text>
<text x="21.60" y="414.40" font-size="6.0" fill="#b2b2b2" text-anchor="end" stroke="#bdbdbd" stroke-width="0.18">29</text>
<text x="21.60" y="427.80" font-size="6.0" fill="#b2b2b2" text-anchor="end" stroke="#bdbdbd" stroke-width="0.18">32</text>
<circle cx="81.70" cy="119.30" r="3.80" fill="#1a70ee" />
<circle cx="81.70" cy="132.80" r="3.80" fill="#41a25f" />
<circle cx="81.70" cy="146.30" r="3.80" fill="#f9c940" />
<circle cx="81.70" cy="159.60" r="3.80" fill="#d5302c" />
<circle cx="81.70" cy="199.60" r="3.80" fill="#1a70ee" />
<circle cx="81.70" cy="212.90" r="3.80" fill="#1a70ee" />
<circle cx="81.70" cy="238.30" r="3.80" fill="#1a70ee" />
<circle cx="81.70" cy="251.20" r="3.80" fill="#1a70ee" />
<circle cx="81.70" cy="264.50" r="3.80" fill="#41a25f" />
<circle cx="81.70" cy="277.90" r="3.80" fill="#41a25f" />
<circle cx="81.70" cy="299.00" r="3.80" fill="#f9c940" />
<circle cx="81.70" cy="319.60" r="3.80" fill="#41a25f" />
<circle cx="81.70" cy="333.00" r="3.80" fill="#41a25f" />
<circle cx="81.70" cy="358.60" r="3.80" fill="#f9c940" />
<circle cx="81.70" cy="372.10" r="3.80" fill="#d5302c" />
<circle cx="81.70" cy="385.30" r="3.80" fill="#d5302c" />
<circle cx="81.70" cy="398.60" r="3.80" fill="#d5302c" />
<circle cx="81.70" cy="411.80" r="3.80" fill="#d5302c" />
<circle cx="81.70" cy="425.20" r="3.80" fill="#d5302c" />
<rect x="58.25" y="186.35" width="5.5" height="3.3" rx="0.5" fill="#fff" stroke="#606060" stroke-width="0.85"/>
<path d="M59.55 186.35 v-1.3 a1.45 1.45 0 0 1 2.9 0 v1.3" fill="none" stroke="#606060" stroke-width="0.85"/>
<rect x="58.25" y="264.60" width="5.5" height="3.3" rx="0.5" fill="#fff" stroke="#606060" stroke-width="0.85"/>
<path d="M59.55 264.60 v-1.3 a1.45 1.45 0 0 1 2.9 0 v1.3" fill="none" stroke="#606060" stroke-width="0.85"/>
<rect x="58.25" y="372.20" width="5.5" height="3.3" rx="0.5" fill="#fff" stroke="#606060" stroke-width="0.85"/>
<path d="M59.55 372.20 v-1.3 a1.45 1.45 0 0 1 2.9 0 v1.3" fill="none" stroke="#606060" stroke-width="0.85"/>
<rect x="58.25" y="385.40" width="5.5" height="3.3" rx="0.5" fill="#fff" stroke="#606060" stroke-width="0.85"/>
<path d="M59.55 385.40 v-1.3 a1.45 1.45 0 0 1 2.9 0 v1.3" fill="none" stroke="#606060" stroke-width="0.85"/>
<rect x="58.25" y="398.70" width="5.5" height="3.3" rx="0.5" fill="#fff" stroke="#606060" stroke-width="0.85"/>
<path d="M59.55 398.70 v-1.3 a1.45 1.45 0 0 1 2.9 0 v1.3" fill="none" stroke="#606060" stroke-width="0.85"/>
<rect x="58.25" y="411.90" width="5.5" height="3.3" rx="0.5" fill="#fff" stroke="#606060" stroke-width="0.85"/>
<path d="M59.55 411.90 v-1.3 a1.45 1.45 0 0 1 2.9 0 v1.3" fill="none" stroke="#606060" stroke-width="0.85"/>
<rect x="58.25" y="425.30" width="5.5" height="3.3" rx="0.5" fill="#fff" stroke="#606060" stroke-width="0.85"/>
<path d="M59.55 425.30 v-1.3 a1.45 1.45 0 0 1 2.9 0 v1.3" fill="none" stroke="#606060" stroke-width="0.85"/>
<path d="M41.80 217.70 V221.00 a1.8 1.8 0 0 1 -3.6 0 V217.10 a1.25 1.25 0 0 1 2.5 0 V220.80 a0.6 0.6 0 0 1 -1.2 0 V217.90" fill="none" stroke="#757575" stroke-width="0.8" stroke-linecap="round"/>
<rect x="47.40" y="216.40" width="6.5" height="4.9" rx="1.0" fill="none" stroke="#757575" stroke-width="0.85"/>
<path d="M51.55 221.30 h1.2 v1.3z" fill="#757575" stroke="#757575" stroke-width="0.3" stroke-linejoin="round"/>
<path d="M41.70 78.70 V82.00 a1.8 1.8 0 0 1 -3.6 0 V78.10 a1.25 1.25 0 0 1 2.5 0 V81.80 a0.6 0.6 0 0 1 -1.2 0 V78.90" fill="none" stroke="#b8b8b8" stroke-width="0.75" stroke-linecap="round"/>
<rect x="47.45" y="77.25" width="6.5" height="4.9" rx="1.0" fill="none" stroke="#b8b8b8" stroke-width="0.75"/>
<path d="M51.60 82.15 h1.2 v1.3z" fill="#b8b8b8" stroke="#b8b8b8" stroke-width="0.3" stroke-linejoin="round"/>
<text x="61.50" y="82.70" font-size="7.8" fill="#a8a8a8" font-style="italic" text-anchor="middle">i</text>
<text x="110.40" y="107.70" font-size="7.12" fill="#fff" font-weight="bold" stroke="#fff" stroke-width="0.1">STATUS KEY</text>
<rect x="101.30" y="102.65" width="5.7" height="5.7" rx="0.6" fill="#f4f4f4"/>
<rect x="102.50" y="104.85" width="3.30" height="1.3" fill="#555"/>
<text x="118.40" y="121.40" font-size="7.12" fill="#000" font-weight="bold" stroke="#000" stroke-width="0.1">COMPLETE</text>
<text x="118.40" y="134.90" font-size="7.12" fill="#000" font-weight="bold" stroke="#000" stroke-width="0.1">IN PROGRESS</text>
<text x="118.40" y="148.40" font-size="7.12" fill="#000" font-weight="bold" stroke="#000" stroke-width="0.1">ON HOLD</text>
<text x="118.40" y="161.70" font-size="7.12" fill="#000" font-weight="bold" stroke="#000" stroke-width="0.1">NOT STARTED</text>
<text x="110.40" y="188.05" font-size="7.12" fill="#fff" font-weight="bold" stroke="#fff" stroke-width="0.1">House Remodel</text>
<rect x="101.30" y="183.30" width="5.7" height="5.7" rx="0.6" fill="#f4f4f4"/>
<rect x="102.50" y="185.50" width="3.30" height="1.3" fill="#555"/>
<text x="118.40" y="201.70" font-size="7.12" fill="#000" font-weight="bold" stroke="#000" stroke-width="0.1">Planning</text>
<rect x="109.40" y="196.65" width="5.7" height="5.7" rx="0.6" fill="#f1f1f1" stroke="#cdcdcd" stroke-width="0.5"/>
<rect x="110.80" y="199.00" width="2.90" height="0.95" fill="#222"/>
<text x="126.30" y="215.00" font-size="7.12" fill="#000" >Final estimate complete</text>
<text x="126.30" y="240.40" font-size="7.12" fill="#000" >Contract Signed</text>
<text x="126.30" y="253.30" font-size="7.12" fill="#000" >Permission to schedule work?</text>
<text x="118.40" y="266.60" font-size="7.12" fill="#000" font-weight="bold" stroke="#000" stroke-width="0.1">Demo Prep</text>
<rect x="109.40" y="261.55" width="5.7" height="5.7" rx="0.6" fill="#f1f1f1" stroke="#cdcdcd" stroke-width="0.5"/>
<rect x="110.80" y="263.90" width="2.90" height="0.95" fill="#222"/>
<text x="126.30" y="280.00" font-size="7.12" fill="#000" >Appliance, fixture &amp; salvage</text>
<text x="126.30" y="301.10" font-size="7.12" fill="#000" >Electrical- Cut power &amp; Install</text>
<text x="126.30" y="309.20" font-size="7.12" fill="#111" >temp service</text>
<text x="126.30" y="321.70" font-size="7.12" fill="#000" >Safety Fence delivery/setup</text>
<text x="126.30" y="335.10" font-size="7.12" fill="#000" >Install office/safety area (plans</text>
<text x="126.30" y="343.20" font-size="7.12" fill="#111" >desk,first aid,phone)</text>
<text x="126.30" y="360.70" font-size="7.12" fill="#000" >Install site camera(s)</text>
<text x="118.40" y="374.20" font-size="7.12" fill="#000" font-weight="bold" stroke="#000" stroke-width="0.1">Demolition</text>
<rect x="109.40" y="369.15" width="5.7" height="5.7" rx="0.6" fill="#f1f1f1" stroke="#cdcdcd" stroke-width="0.5"/>
<rect x="110.80" y="371.50" width="2.90" height="0.95" fill="#222"/>
<rect x="111.73" y="370.55" width="0.95" height="2.90" fill="#222"/>
<text x="118.40" y="387.40" font-size="7.12" fill="#000" font-weight="bold" stroke="#000" stroke-width="0.1">Excavation</text>
<rect x="109.40" y="382.35" width="5.7" height="5.7" rx="0.6" fill="#f1f1f1" stroke="#cdcdcd" stroke-width="0.5"/>
<rect x="110.80" y="384.70" width="2.90" height="0.95" fill="#222"/>
<rect x="111.73" y="383.75" width="0.95" height="2.90" fill="#222"/>
<text x="118.40" y="400.70" font-size="7.12" fill="#000" font-weight="bold" stroke="#000" stroke-width="0.1">Concrete</text>
<rect x="109.40" y="395.65" width="5.7" height="5.7" rx="0.6" fill="#f1f1f1" stroke="#cdcdcd" stroke-width="0.5"/>
<rect x="110.80" y="398.00" width="2.90" height="0.95" fill="#222"/>
<rect x="111.73" y="397.05" width="0.95" height="2.90" fill="#222"/>
<text x="118.40" y="413.90" font-size="7.12" fill="#000" font-weight="bold" stroke="#000" stroke-width="0.1">Pre backfill</text>
<rect x="109.40" y="408.85" width="5.7" height="5.7" rx="0.6" fill="#f1f1f1" stroke="#cdcdcd" stroke-width="0.5"/>
<rect x="110.80" y="411.20" width="2.90" height="0.95" fill="#222"/>
<rect x="111.73" y="410.25" width="0.95" height="2.90" fill="#222"/>
<text x="118.40" y="427.30" font-size="7.12" fill="#000" font-weight="bold" stroke="#000" stroke-width="0.1">Framing</text>
<rect x="109.40" y="422.25" width="5.7" height="5.7" rx="0.6" fill="#f1f1f1" stroke="#cdcdcd" stroke-width="0.5"/>
<rect x="110.80" y="424.60" width="2.90" height="0.95" fill="#222"/>
<rect x="111.73" y="423.65" width="0.95" height="2.90" fill="#222"/>
<text x="237.00" y="241.60" font-size="9.8" fill="#dc352d" font-weight="bold" text-anchor="middle" >!</text>
<text x="237.00" y="302.30" font-size="9.8" fill="#dc352d" font-weight="bold" text-anchor="middle" >!</text>
<path d="M237.0 354.90 v5.6" fill="none" stroke="#2b7de9" stroke-width="1.5" stroke-linecap="round"/><path d="M234.7 358.80 l2.3 2.5 l2.3 -2.5" fill="none" stroke="#2b7de9" stroke-width="1.3" stroke-linecap="round" stroke-linejoin="round"/>
<circle cx="256.30" cy="213.20" r="5.25" fill="#cf7a52" />
<text x="256.30" y="214.95" font-size="5.0" fill="#fff" text-anchor="middle" opacity="0.92" stroke="#fff" stroke-width="0.12">AW</text>
<text x="263.90" y="215.80" font-size="7.07" fill="#111" >Abby Wright</text>
<circle cx="256.30" cy="225.10" r="5.25" fill="#41a862" />
<text x="256.30" y="226.85" font-size="5.0" fill="#fff" text-anchor="middle" opacity="0.92" stroke="#fff" stroke-width="0.12">BT</text>
<text x="263.90" y="227.70" font-size="7.07" fill="#111" >Bob Thorton</text>
<circle cx="256.30" cy="238.60" r="5.25" fill="#a5552f" />
<text x="256.30" y="240.35" font-size="5.0" fill="#fff" text-anchor="middle" opacity="0.92" stroke="#fff" stroke-width="0.12">BH</text>
<text x="263.90" y="241.20" font-size="7.07" fill="#111" >Bill Hudson</text>
<circle cx="256.30" cy="251.50" r="5.25" fill="#1f456e" />
<text x="256.30" y="253.25" font-size="5.0" fill="#fff" text-anchor="middle" opacity="0.92" stroke="#fff" stroke-width="0.12">AH</text>
<text x="263.90" y="254.10" font-size="7.07" fill="#111" >Adam Hart</text>
<circle cx="256.30" cy="278.20" r="5.25" fill="#41a862" />
<text x="256.30" y="279.95" font-size="5.0" fill="#fff" text-anchor="middle" opacity="0.92" stroke="#fff" stroke-width="0.12">BT</text>
<text x="263.90" y="280.80" font-size="7.07" fill="#111" >Bob Thorton</text>
<circle cx="256.30" cy="299.30" r="5.25" fill="#b44fc0" />
<text x="256.30" y="301.05" font-size="5.0" fill="#fff" text-anchor="middle" opacity="0.92" stroke="#fff" stroke-width="0.12">JH</text>
<text x="263.90" y="301.90" font-size="7.07" fill="#111" >John Hart</text>
<circle cx="256.30" cy="319.90" r="5.25" fill="#b44fc0" />
<text x="256.30" y="321.65" font-size="5.0" fill="#fff" text-anchor="middle" opacity="0.92" stroke="#fff" stroke-width="0.12">JH</text>
<text x="263.90" y="322.50" font-size="7.07" fill="#111" >John Hart</text>
<circle cx="256.30" cy="333.30" r="5.25" fill="#1f456e" />
<text x="256.30" y="335.05" font-size="5.0" fill="#fff" text-anchor="middle" opacity="0.92" stroke="#fff" stroke-width="0.12">AH</text>
<text x="263.90" y="335.90" font-size="7.07" fill="#111" >Adam Hart</text>
<circle cx="256.30" cy="345.20" r="5.25" fill="#b44fc0" />
<text x="256.30" y="346.95" font-size="5.0" fill="#fff" text-anchor="middle" opacity="0.92" stroke="#fff" stroke-width="0.12">JH</text>
<text x="263.90" y="347.80" font-size="7.07" fill="#111" >John Hart</text>
<circle cx="256.30" cy="358.90" r="5.25" fill="#9b5523" />
<text x="256.30" y="360.65" font-size="5.0" fill="#fff" text-anchor="middle" opacity="0.92" stroke="#fff" stroke-width="0.12">TW</text>
<text x="263.90" y="361.50" font-size="7.07" fill="#111" >Tim Wilson</text>
<text x="322.30" y="188.05" font-size="7.0" fill="#fff" font-weight="bold" stroke="#fff" stroke-width="0.12">09/21/25</text>
<text x="361.20" y="188.05" font-size="7.0" fill="#fff" font-weight="bold" stroke="#fff" stroke-width="0.12">10/24/25</text>
<text x="427.40" y="188.05" font-size="7.0" fill="#fff" font-weight="bold" text-anchor="end" stroke="#fff" stroke-width="0.12">26d</text>
<text x="459.00" y="188.05" font-size="7.0" fill="#fff" font-weight="bold" text-anchor="end" stroke="#fff" stroke-width="0.12">31%</text>
<text x="322.30" y="201.70" font-size="7.0" fill="#111" >09/21/25</text>
<text x="361.20" y="201.70" font-size="7.0" fill="#111" >09/30/25</text>
<text x="427.40" y="201.70" font-size="7.0" fill="#111" text-anchor="end" >8d</text>
<text x="459.00" y="201.70" font-size="7.0" fill="#111" text-anchor="end" >100%</text>
<text x="322.30" y="215.00" font-size="7.0" fill="#111" >09/21/25</text>
<text x="361.20" y="215.00" font-size="7.0" fill="#111" >09/21/25</text>
<text x="427.40" y="215.00" font-size="7.0" fill="#111" text-anchor="end" >1d</text>
<text x="459.00" y="215.00" font-size="7.0" fill="#111" text-anchor="end" >100%</text>
<text x="322.30" y="240.40" font-size="7.0" fill="#111" >09/22/25</text>
<text x="361.20" y="240.40" font-size="7.0" fill="#111" >09/29/25</text>
<text x="427.40" y="240.40" font-size="7.0" fill="#111" text-anchor="end" >6d</text>
<text x="459.00" y="240.40" font-size="7.0" fill="#111" text-anchor="end" >100%</text>
<text x="322.30" y="253.30" font-size="7.0" fill="#111" >09/30/25</text>
<text x="361.20" y="253.30" font-size="7.0" fill="#111" >09/30/25</text>
<text x="427.40" y="253.30" font-size="7.0" fill="#111" text-anchor="end" >1d</text>
<text x="459.00" y="253.30" font-size="7.0" fill="#111" text-anchor="end" >100%</text>
<text x="322.30" y="266.60" font-size="7.0" fill="#111" >10/01/25</text>
<text x="361.20" y="266.60" font-size="7.0" fill="#111" >10/06/25</text>
<text x="427.40" y="266.60" font-size="7.0" fill="#111" text-anchor="end" >4d</text>
<text x="459.00" y="266.60" font-size="7.0" fill="#111" text-anchor="end" >43%</text>
<text x="322.30" y="280.00" font-size="7.0" fill="#111" >10/01/25</text>
<text x="361.20" y="280.00" font-size="7.0" fill="#111" >10/01/25</text>
<text x="427.40" y="280.00" font-size="7.0" fill="#111" text-anchor="end" >1d</text>
<text x="459.00" y="280.00" font-size="7.0" fill="#111" text-anchor="end" >20%</text>
<text x="322.30" y="301.10" font-size="7.0" fill="#111" >10/02/25</text>
<text x="361.20" y="301.10" font-size="7.0" fill="#111" >10/02/25</text>
<text x="427.40" y="301.10" font-size="7.0" fill="#111" text-anchor="end" >1d</text>
<text x="459.00" y="301.10" font-size="7.0" fill="#111" text-anchor="end" >18%</text>
<text x="322.30" y="321.70" font-size="7.0" fill="#111" >10/03/25</text>
<text x="361.20" y="321.70" font-size="7.0" fill="#111" >10/03/25</text>
<text x="427.40" y="321.70" font-size="7.0" fill="#111" text-anchor="end" >1d</text>
<text x="459.00" y="321.70" font-size="7.0" fill="#111" text-anchor="end" >50%</text>
<text x="322.30" y="335.10" font-size="7.0" fill="#111" >10/06/25</text>
<text x="361.20" y="335.10" font-size="7.0" fill="#111" >10/06/25</text>
<text x="427.40" y="335.10" font-size="7.0" fill="#111" text-anchor="end" >1d</text>
<text x="459.00" y="335.10" font-size="7.0" fill="#111" text-anchor="end" >50%</text>
<text x="322.30" y="360.70" font-size="7.0" fill="#111" >10/06/25</text>
<text x="361.20" y="360.70" font-size="7.0" fill="#111" >10/06/25</text>
<text x="427.40" y="360.70" font-size="7.0" fill="#111" text-anchor="end" >1d</text>
<text x="459.00" y="360.70" font-size="7.0" fill="#111" text-anchor="end" >75%</text>
<text x="322.30" y="374.20" font-size="7.0" fill="#111" >10/06/25</text>
<text x="361.20" y="374.20" font-size="7.0" fill="#111" >10/24/25</text>
<text x="427.40" y="374.20" font-size="7.0" fill="#111" text-anchor="end" >15d</text>
<defs><linearGradient id="sg" x1="0" y1="0" x2="0" y2="1"><stop offset="0" stop-color="#bdbdbd"/><stop offset="0.3" stop-color="#d6d6d6"/><stop offset="0.5" stop-color="#eeeeee"/><stop offset="0.7" stop-color="#e2e2e2"/><stop offset="0.8" stop-color="#b8b8b8"/><stop offset="1" stop-color="#a2a2a2"/></linearGradient><clipPath id="gc"><rect x="462.6" y="99.3" width="275.1" height="331"/></clipPath></defs>
<g clip-path="url(#gc)">
<path d="M486.20 183.25 H885.50 V191.70 L882.50 188.70 H489.20 L486.20 191.70 Z" fill="#cbcbcb" stroke="#8f8f8f" stroke-width="0.55" stroke-linejoin="round"/>
<rect x="486.50" y="183.55" width="123.48" height="4.95" fill="url(#sg)"/>
<path d="M486.20 196.60 H603.50 V205.05 L600.50 202.05 H489.20 L486.20 205.05 Z" fill="#cbcbcb" stroke="#9a9a9a" stroke-width="0.55" stroke-linejoin="round"/>
<path d="M486.20 196.60 H603.50 V205.05 L600.50 202.05 H489.20 L486.20 205.05 Z" fill="url(#sg)" stroke="#9a9a9a" stroke-width="0.55"/>
<rect x="486.50" y="196.90" width="116.70" height="5.05" fill="url(#sg)"/>
<text x="606.10" y="200.50" font-size="5.68" fill="#3a3a3a">Planning</text>
<rect x="486.65" y="210.05" width="11.00" height="6.7" fill="#cae4f8" stroke="#a5c3dd" stroke-width="0.6"/>
<rect x="487.15" y="212.05" width="10.00" height="2.70" fill="#ebf4fb" stroke="#a9bac9" stroke-width="0.4"/>
<text x="500.65" y="213.80" font-size="5.68" fill="#3a3a3a">Final estimate complete</text>
<rect x="498.40" y="235.45" width="93.25" height="6.7" fill="#cae4f8" stroke="#a5c3dd" stroke-width="0.6"/>
<rect x="498.90" y="237.45" width="92.25" height="2.70" fill="#ebf4fb" stroke="#a9bac9" stroke-width="0.4"/>
<text x="594.65" y="239.20" font-size="5.68" fill="#3a3a3a">Contract Signed</text>
<rect x="592.40" y="248.35" width="11.00" height="6.7" fill="#cae4f8" stroke="#a5c3dd" stroke-width="0.6"/>
<rect x="592.90" y="250.35" width="10.00" height="2.70" fill="#ebf4fb" stroke="#a9bac9" stroke-width="0.4"/>
<text x="606.40" y="252.10" font-size="5.68" fill="#3a3a3a">Permission to schedule work?</text>
<path d="M603.70 261.50 H674.00 V269.95 L671.00 266.95 H606.70 L603.70 269.95 Z" fill="#cbcbcb" stroke="#9a9a9a" stroke-width="0.55" stroke-linejoin="round"/>
<rect x="604.10" y="262.60" width="29.83" height="3.25" fill="#f1f1f1" stroke="#b0b0b0" stroke-width="0.45"/>
<text x="676.60" y="265.40" font-size="5.68" fill="#3a3a3a">Demo Prep</text>
<rect x="604.15" y="275.05" width="11.00" height="6.7" fill="#cae4f8" stroke="#a5c3dd" stroke-width="0.6"/>
<rect x="604.65" y="277.05" width="1.20" height="2.70" fill="#ebf4fb" stroke="#a9bac9" stroke-width="0.4"/>
<text x="618.15" y="278.80" font-size="5.68" fill="#3a3a3a">Appliance, fixture &amp; salvage</text>
<rect x="615.90" y="296.15" width="11.00" height="6.7" fill="#cae4f8" stroke="#a5c3dd" stroke-width="0.6"/>
<rect x="616.40" y="298.15" width="1.20" height="2.70" fill="#ebf4fb" stroke="#a9bac9" stroke-width="0.4"/>
<text x="629.90" y="299.90" font-size="5.68" fill="#3a3a3a">Electrical- Cut power &amp; Install temp service</text>
<rect x="627.65" y="316.75" width="11.00" height="6.7" fill="#cae4f8" stroke="#a5c3dd" stroke-width="0.6"/>
<rect x="628.15" y="318.75" width="4.50" height="2.70" fill="#ebf4fb" stroke="#a9bac9" stroke-width="0.4"/>
<text x="641.65" y="320.50" font-size="5.68" fill="#3a3a3a">Safety Fence delivery/setup</text>
<rect x="662.90" y="330.15" width="11.00" height="6.7" fill="#cae4f8" stroke="#a5c3dd" stroke-width="0.6"/>
<rect x="663.40" y="332.15" width="4.50" height="2.70" fill="#ebf4fb" stroke="#a9bac9" stroke-width="0.4"/>
<text x="676.90" y="333.90" font-size="5.68" fill="#3a3a3a">Install office/safety area (plans desk,first aid,phone)</text>
<rect x="662.90" y="355.75" width="11.00" height="6.7" fill="#cae4f8" stroke="#a5c3dd" stroke-width="0.6"/>
<rect x="663.40" y="357.75" width="7.25" height="2.70" fill="#ebf4fb" stroke="#a9bac9" stroke-width="0.4"/>
<text x="676.90" y="359.50" font-size="5.68" fill="#3a3a3a">Install site camera(s)</text>
<path d="M662.45 369.10 H885.50 V377.55 L882.50 374.55 H665.45 L662.45 377.55 Z" fill="#cbcbcb" stroke="#9a9a9a" stroke-width="0.55" stroke-linejoin="round"/>
<path d="M497.65 215.70 H498.85 Q499.45 215.70 499.45 216.50 V233.30" fill="none" stroke="#3a3a3a" stroke-width="0.55"/>
<path d="M498.20 232.40 H500.70 L499.45 234.50 Z" fill="#2a2a2a"/>
<path d="M591.65 241.10 H592.85 Q593.45 241.10 593.45 241.90 V246.20" fill="none" stroke="#3a3a3a" stroke-width="0.55"/>
<path d="M592.20 245.30 H594.70 L593.45 247.40 Z" fill="#2a2a2a"/>
<path d="M603.40 254.00 H604.60 Q605.20 254.00 605.20 254.80 V272.90" fill="none" stroke="#3a3a3a" stroke-width="0.55"/>
<path d="M603.95 272.00 H606.45 L605.20 274.10 Z" fill="#2a2a2a"/>
<path d="M615.15 280.70 H616.35 Q616.95 280.70 616.95 281.50 V294.00" fill="none" stroke="#3a3a3a" stroke-width="0.55"/>
<path d="M615.70 293.10 H618.20 L616.95 295.20 Z" fill="#2a2a2a"/>
<path d="M626.90 301.80 H628.10 Q628.70 301.80 628.70 302.60 V314.60" fill="none" stroke="#3a3a3a" stroke-width="0.55"/>
<path d="M627.45 313.70 H629.95 L628.70 315.80 Z" fill="#2a2a2a"/>
</g>
<rect x="7.0" y="9.65" width="8.6" height="1.1" fill="#e8ecf2"/>
<rect x="7.0" y="12.35" width="8.6" height="1.1" fill="#e8ecf2"/>
<rect x="7.0" y="15.05" width="8.6" height="1.1" fill="#e8ecf2"/>
<rect x="24.6" y="5.0" width="115.4" height="15.7" rx="0.8" fill="#fff"/>
<text x="30.80" y="15.60" font-size="7" fill="#4a4a4a" textLength="26.40" lengthAdjust="spacingAndGlyphs" >Search...</text>
<circle cx="132" cy="12.7" r="2.75" fill="none" stroke="#4a4a4a" stroke-width="1.0"/><path d="M134 14.8 L135.9 16.6" stroke="#4a4a4a" stroke-width="1.1" stroke-linecap="round"/>
<text x="353.70" y="16.80" font-size="12" fill="#fff" textLength="58.80" lengthAdjust="spacingAndGlyphs" stroke="#fff" stroke-width="0.25">smartsheet</text>
<circle cx="698.4" cy="12.6" r="3.8" fill="#cdcdc8"/>
<text x="698.40" y="15.00" font-size="6.6" fill="#0b2e59" font-weight="bold" text-anchor="middle" >?</text>
<path d="M713.3 15.6 c0.9 -0.7 0.9 -1.6 0.9 -3.2 a2.4 2.6 0 0 1 4.8 0 c0 1.6 0 2.5 0.9 3.2 z" fill="#cdcdc8"/><circle cx="716.6" cy="16.4" r="0.9" fill="#cdcdc8"/><rect x="716.1" y="8.9" width="1" height="1" fill="#cdcdc8"/>
<rect x="731.40" y="9.50" width="1.7" height="1.7" fill="#cdcdc8"/>
<rect x="731.40" y="12.40" width="1.7" height="1.7" fill="#cdcdc8"/>
<rect x="731.40" y="15.30" width="1.7" height="1.7" fill="#cdcdc8"/>
<rect x="734.30" y="9.50" width="1.7" height="1.7" fill="#cdcdc8"/>
<rect x="734.30" y="12.40" width="1.7" height="1.7" fill="#cdcdc8"/>
<rect x="734.30" y="15.30" width="1.7" height="1.7" fill="#cdcdc8"/>
<rect x="737.20" y="9.50" width="1.7" height="1.7" fill="#cdcdc8"/>
<rect x="737.20" y="12.40" width="1.7" height="1.7" fill="#cdcdc8"/>
<rect x="737.20" y="15.30" width="1.7" height="1.7" fill="#cdcdc8"/>
<defs><clipPath id="av"><circle cx="755.8" cy="12.6" r="6.9"/></clipPath></defs>
<g clip-path="url(#av)"><rect x="748" y="5" width="16" height="16" fill="#c56a3d"/><rect x="749.2" y="5" width="1.6" height="16" fill="#dd9a6c"/><rect x="751.6" y="5" width="1.2" height="16" fill="#d98a58"/><rect x="758.2" y="5" width="1.5" height="16" fill="#d9905f"/><rect x="760.6" y="5" width="1.2" height="16" fill="#b4552d"/><rect x="762.2" y="5" width="1.2" height="16" fill="#cf8050"/><ellipse cx="755.3" cy="10.6" rx="2.5" ry="3.3" fill="#e9bfa3"/><path d="M752.7 9.2 q2.6 -4 5.4 -0.2 q-1.2 -1.3 -2.8 -1.1 q-1.8 0.1 -2.6 1.3z" fill="#d59a6a"/><path d="M749.4 21 q0.2 -4.6 4.6 -5.6 q2.6 0.4 4.2 1.6 q1.4 1.4 1.6 4z" fill="#d3302a"/><path d="M756.9 16.2 l1.3 2.2 0.9 -1.3z" fill="#f2e6e0"/></g>
<text x="5.00" y="40.90" font-size="7.2" fill="#333" textLength="10.60" lengthAdjust="spacingAndGlyphs" stroke="#333" stroke-width="0.12">File</text>
<text x="26.00" y="40.90" font-size="7.2" fill="#333" textLength="36.00" lengthAdjust="spacingAndGlyphs" stroke="#333" stroke-width="0.12">Automation</text>
<text x="72.30" y="40.90" font-size="7.2" fill="#333" textLength="19.40" lengthAdjust="spacingAndGlyphs" stroke="#333" stroke-width="0.12">Forms</text>
<path d="M306.8 35.0 l0.95 2.1 2.25 0.25 -1.7 1.5 0.5 2.2 -2 -1.15 -2 1.15 0.5 -2.2 -1.7 -1.5 2.25 -0.25z" fill="#fcfcfc" stroke="#c2c2c2" stroke-width="0.55" stroke-linejoin="round"/>
<text x="314.20" y="41.90" font-size="9.9" fill="#3c3c3c" textLength="138.30" lengthAdjust="spacingAndGlyphs" >Construction Timeline with Gantt</text>
<rect x="726.0" y="29.9" width="38.2" height="16.0" rx="1" fill="#1673e6"/>
<g fill="#fff"><ellipse cx="732.6" cy="36.5" rx="1.25" ry="1.45"/><path d="M730.5 41.3 q0.2 -2.6 2.1 -3.2 q1.2 0.3 1.4 1.2 l-0.6 2z"/><ellipse cx="736.3" cy="36.5" rx="1.45" ry="1.6"/><path d="M733.5 41.6 q0.2 -2.8 2.8 -3.4 q2.6 0.6 2.8 3.4z"/></g>
<text x="741.90" y="40.70" font-size="7.4" fill="#fff" textLength="17.40" lengthAdjust="spacingAndGlyphs" stroke="#fff" stroke-width="0.15">Share</text>
<line x1="61.8" y1="50.6" x2="61.8" y2="67.6" stroke="#e8e8e8" stroke-width="0.8"/>
<line x1="153.5" y1="50.6" x2="153.5" y2="67.6" stroke="#e8e8e8" stroke-width="0.8"/>
<line x1="186.4" y1="50.6" x2="186.4" y2="67.6" stroke="#e8e8e8" stroke-width="0.8"/>
<line x1="215.3" y1="50.6" x2="215.3" y2="67.6" stroke="#e8e8e8" stroke-width="0.8"/>
<line x1="239.4" y1="50.6" x2="239.4" y2="67.6" stroke="#e8e8e8" stroke-width="0.8"/>
<line x1="346.8" y1="50.6" x2="346.8" y2="67.6" stroke="#e8e8e8" stroke-width="0.8"/>
<line x1="413.3" y1="50.6" x2="413.3" y2="67.6" stroke="#e8e8e8" stroke-width="0.8"/>
<line x1="446.6" y1="50.6" x2="446.6" y2="67.6" stroke="#e8e8e8" stroke-width="0.8"/>
<line x1="510.8" y1="50.6" x2="510.8" y2="67.6" stroke="#e8e8e8" stroke-width="0.8"/>
<path d="M5.9 56 h5.2 l1.2 1.2 v5.6 h-6.4z" fill="#c7c7c7"/><rect x="7.2" y="56.6" width="3.2" height="1.9" fill="#f8f8f8"/><rect x="7.2" y="60.0" width="3.8" height="2.2" fill="#f8f8f8"/>
<rect x="21.4" y="55.2" width="4.8" height="2.6" fill="#c9c9c9"/><rect x="19.7" y="57.4" width="8.2" height="3.9" rx="0.8" fill="#1d4f91"/><rect x="21.3" y="59.8" width="5" height="3.2" fill="#9a9a9a"/><rect x="20.6" y="58.1" width="1" height="0.8" fill="#4f9cf0"/>
<path d="M36.2 58.2 h2.6 a1.9 1.9 0 0 1 0 3.8 h-0.8" fill="none" stroke="#c7c7c7" stroke-width="0.8"/><path d="M37.2 56.5 l-1.9 1.7 1.9 1.7" fill="none" stroke="#c7c7c7" stroke-width="0.8"/>
<path d="M54.2 58.2 h-2.6 a1.9 1.9 0 0 0 0 3.8 h0.8" fill="none" stroke="#c7c7c7" stroke-width="0.8"/><path d="M53.2 56.5 l1.9 1.7 -1.9 1.7" fill="none" stroke="#c7c7c7" stroke-width="0.8"/>
<g fill="#1d4478"><rect x="66.8" y="56.4" width="4.0" height="1.4"/><rect x="69.2" y="58.8" width="4.0" height="1.4"/><rect x="71.6" y="61.2" width="4.2" height="1.4"/></g><path d="M70.8 57.1 h1 v1.7 M73.2 59.5 h1 v1.7" fill="none" stroke="#777" stroke-width="0.45"/>
<text x="78.20" y="61.60" font-size="7.0" fill="#2a2a2a" textLength="33.30" lengthAdjust="spacingAndGlyphs" stroke="#2a2a2a" stroke-width="0.14">Gantt View</text>
<path d="M113.9 58.1 h3.4 l-1.7 2.0z" fill="#2a2a2a"/>
<path d="M124.6 56.6 h5.4 l-2.1 2.6 v3.6 l-1.2 -0.8 v-2.8z" fill="none" stroke="#2a2a2a" stroke-width="0.8" stroke-linejoin="round"/><path d="M125.6 57.1 h3.4 l-1.7 1.9z" fill="#9a9a9a"/>
<text x="133.00" y="61.60" font-size="7.0" fill="#2a2a2a" textLength="14.60" lengthAdjust="spacingAndGlyphs" stroke="#2a2a2a" stroke-width="0.14">Filter</text>
<g stroke="#c7c7c7" stroke-width="0.7" fill="none"><path d="M158.2 56.6 h8.6 M158.2 58.6 h3 M158.2 60.4 h3 M158.2 62.2 h3 M167 60.4 h-3.6 m1.3 -1.2 l-1.3 1.2 1.3 1.2"/><path d="M172.8 56.6 h8.6 M178.4 58.6 h3 M178.4 60.4 h3 M178.4 62.2 h3 M172.8 60.4 h3.6 m-1.3 -1.2 l1.3 1.2 -1.3 1.2"/></g>
<text x="191.00" y="61.70" font-size="7.2" fill="#bcbcbc" textLength="13.80" lengthAdjust="spacingAndGlyphs" >Arial</text>
<path d="M207.45 58.3 h3.1 l-1.55 1.8z" fill="#c7c7c7"/>
<text x="220.80" y="61.70" font-size="7.2" fill="#bcbcbc" textLength="6.60" lengthAdjust="spacingAndGlyphs" >10</text>
<path d="M230.65 58.3 h3.1 l-1.55 1.8z" fill="#c7c7c7"/>
<text x="246.20" y="61.80" font-size="7.4" fill="#bcbcbc" font-weight="bold" >B</text>
<text x="261.60" y="61.80" font-size="7.4" fill="#bcbcbc" font-style="italic" font-family="Liberation Serif,serif">I</text>
<text x="275.00" y="61.60" font-size="7.0" fill="#bcbcbc" >U</text>
<line x1="275" y1="63" x2="280.2" y2="63" stroke="#c7c7c7" stroke-width="0.6"/>
<text x="289.40" y="61.80" font-size="7.4" fill="#bcbcbc" >S</text>
<line x1="288.8" y1="59.3" x2="295.2" y2="59.3" stroke="#c7c7c7" stroke-width="0.6"/>
<path d="M305.5 56 l3.6 3.4 -2.6 2.7 -3 -2.9 2.9 -2.7z" fill="none" stroke="#c7c7c7" stroke-width="0.75"/><circle cx="310.4" cy="61.6" r="0.9" fill="#c7c7c7"/>
<path d="M316.05 58.3 h3.1 l-1.55 1.8z" fill="#c7c7c7"/>
<text x="329.20" y="61.20" font-size="7.2" fill="#bcbcbc" text-anchor="middle" >A</text>
<rect x="325.6" y="62.6" width="7.2" height="1.1" fill="#c7c7c7"/>
<path d="M338.45 58.3 h3.1 l-1.55 1.8z" fill="#c7c7c7"/>
<path d="M352.6 56.6 h7 M352.6 58.6 h5 M352.6 60.6 h7 M352.6 62.4 h4.4" stroke="#c7c7c7" stroke-width="0.7"/>
<path d="M362.05 58.3 h3.1 l-1.55 1.8z" fill="#c7c7c7"/>
<path d="M371 56.6 h9 M371 59.2 h8 a1.2 1.2 0 0 1 0 2.6 h-2 m1 -1 l-1 1 1 1 M371 61.8 h3.6" stroke="#c7c7c7" stroke-width="0.7" fill="none"/>
<path d="M386.2 60.8 l4 -4 3.4 2.4 -3.6 3.6 h-2.4z M388 63 h6" fill="none" stroke="#c7c7c7" stroke-width="0.75" stroke-linejoin="round"/>
<rect x="401" y="56.2" width="6.6" height="2.4" rx="0.5" fill="none" stroke="#c7c7c7" stroke-width="0.75"/><path d="M407.6 57.4 h0.9 v2 h-4 v1.2" fill="none" stroke="#c7c7c7" stroke-width="0.7"/><rect x="403.9" y="60.6" width="1.3" height="2.6" fill="#c7c7c7"/>
<rect x="418.3" y="56.1" width="9.7" height="6.0" rx="0.8" fill="#585858"/><rect x="419.0" y="56.8" width="2.5" height="1.0" fill="#b9cfe8"/><rect x="422.0" y="56.8" width="2.3" height="1.0" fill="#b9cfe8"/><rect x="424.8" y="56.8" width="2.5" height="1.0" fill="#b9cfe8"/><rect x="419.0" y="58.2" width="2.5" height="2.0" fill="#1b6fdc"/><rect x="422.0" y="58.2" width="2.3" height="3.2" fill="#e4e4e4"/><rect x="424.8" y="58.2" width="2.5" height="2.0" fill="#1b6fdc"/><rect x="419.0" y="60.6" width="2.5" height="0.9" fill="#c9d3e0"/><rect x="424.8" y="60.6" width="2.5" height="0.9" fill="#c9d3e0"/>
<path d="M435.4 61.0 l0.7 -1.9 3.9 -4.1 1.4 1.3 -3.9 4.1z" fill="#1f5fb4"/><path d="M435.4 61.0 l0.7 -1.9 1.3 1.3z" fill="#444"/><rect x="434.0" y="61.9" width="7.1" height="1.7" rx="0.3" fill="#f7c928"/>
<g fill="none" stroke="#c7c7c7" stroke-width="0.85"><rect x="451.9" y="59.0" width="5.2" height="3.0" rx="1.5" transform="rotate(-45 454.5 60.5)"/><rect x="455.5" y="56.0" width="5.2" height="3.0" rx="1.5" transform="rotate(-45 458.1 57.5)"/></g>
<rect x="466.9" y="56.4" width="7.6" height="5.6" fill="none" stroke="#c7c7c7" stroke-width="0.7"/><path d="M467.6 61.4 l2 -2.2 1.4 1.3 1.2 -1 1.7 1.9z" fill="#c7c7c7"/><circle cx="469" cy="57.9" r="0.6" fill="#c7c7c7"/>
<g fill="none" stroke="#c7c7c7" stroke-width="0.7"><rect x="484.0" y="56.3" width="6.6" height="2.6"/><rect x="481.0" y="60.0" width="6.6" height="2.6"/><path d="M481 58 h2 M481.9 57 v2"/></g>
<g fill="none" stroke="#c7c7c7" stroke-width="0.7"><rect x="497.8" y="56.0" width="2.4" height="4.6"/><rect x="501.6" y="58.2" width="2.4" height="5"/><path d="M502.8 55.6 v2"/></g>
<text x="517.60" y="62.00" font-size="7.6" fill="#bcbcbc" >Σ</text>
<path d="M529.45 58.3 h3.1 l-1.55 1.8z" fill="#c7c7c7"/>
<text x="541.00" y="62.00" font-size="7.6" fill="#bcbcbc" >$</text>
<path d="M551.85 58.3 h3.1 l-1.55 1.8z" fill="#c7c7c7"/>
<text x="561.80" y="61.90" font-size="7.4" fill="#bcbcbc" textLength="6.30" lengthAdjust="spacingAndGlyphs" >%</text>
<text x="578.40" y="60.40" font-size="9" fill="#bcbcbc" font-weight="bold" >,</text>
<text x="590.00" y="61.20" font-size="6.8" fill="#bcbcbc" >.0</text>
<path d="M595.4 62.6 h2.4 m-1.6 -0.8 l-0.8 0.8 0.8 0.8" fill="none" stroke="#c7c7c7" stroke-width="0.5"/>
<text x="604.00" y="61.20" font-size="6.8" fill="#bcbcbc" >.00</text>
<path d="M612.4 62.6 h2.4 m-0.8 -0.8 l0.8 0.8 -0.8 0.8" fill="none" stroke="#c7c7c7" stroke-width="0.5"/>
<rect x="622.5" y="56.3" width="6.4" height="6.0" fill="none" stroke="#c7c7c7" stroke-width="0.75"/><path d="M624.6 57.4 v1.6 M626.8 57.4 v1.6 M624 60.4 h3.4" stroke="#c7c7c7" stroke-width="0.6"/>
<path d="M634.95 58.3 h3.1 l-1.55 1.8z" fill="#c7c7c7"/>
<circle cx="699.3" cy="59.0" r="2.75" fill="none" stroke="#262626" stroke-width="0.9"/><path d="M701.4 61.1 l2.0 1.9" stroke="#262626" stroke-width="1.15" stroke-linecap="round"/><path d="M698.0 59 h2.6" stroke="#262626" stroke-width="0.75"/>
<circle cx="714.0" cy="59.0" r="2.8" fill="none" stroke="#c6c6c6" stroke-width="0.8"/><path d="M716.1 61.2 l2.1 2" stroke="#c6c6c6" stroke-width="1.0" stroke-linecap="round"/><path d="M712.7 59 h2.6 M714 57.7 v2.6" stroke="#c6c6c6" stroke-width="0.6"/>
<rect x="724.0" y="56.5" width="4.6" height="1.4" fill="#e8382c"/><rect x="727.3" y="58.9" width="3.4" height="1.3" fill="#222"/><rect x="728.6" y="61.2" width="4.6" height="1.4" fill="#e8382c"/><path d="M728.6 57.2 h0.9 v1.7 M730.7 59.5 h0.9 v1.7" fill="none" stroke="#222" stroke-width="0.45"/>
<circle cx="742.8" cy="59.2" r="2.15" fill="none" stroke="#222" stroke-width="1.2"/><g stroke="#222" stroke-width="1.15"><line x1="742.8" y1="55.9" x2="742.8" y2="57.0" transform="rotate(0 742.8 59.2)"/><line x1="742.8" y1="55.9" x2="742.8" y2="57.0" transform="rotate(45 742.8 59.2)"/><line x1="742.8" y1="55.9" x2="742.8" y2="57.0" transform="rotate(90 742.8 59.2)"/><line x1="742.8" y1="55.9" x2="742.8" y2="57.0" transform="rotate(135 742.8 59.2)"/><line x1="742.8" y1="55.9" x2="742.8" y2="57.0" transform="rotate(180 742.8 59.2)"/><line x1="742.8" y1="55.9" x2="742.8" y2="57.0" transform="rotate(225 742.8 59.2)"/><line x1="742.8" y1="55.9" x2="742.8" y2="57.0" transform="rotate(270 742.8 59.2)"/><line x1="742.8" y1="55.9" x2="742.8" y2="57.0" transform="rotate(315 742.8 59.2)"/></g>
<path d="M755.1 60.5 l2.4 -2.3 2.4 2.3" fill="none" stroke="#333" stroke-width="0.85"/>
<path d="M754.20 76.70 h6.8 v4.8 h-1.1 v1.5 l-1.6 -1.5 h-4.1z" fill="none" stroke="#3a3a3a" stroke-width="0.8" stroke-linejoin="round"/>
<path d="M756.10 98.4 v3.2 a1.5 1.5 0 0 0 3 0 v-3.9 a1 1 0 0 0 -2 0 v3.6" fill="none" stroke="#3a3a3a" stroke-width="0.8" stroke-linecap="round"/>
<rect x="754.3" y="117.8" width="6.5" height="4.4" rx="0.4" fill="none" stroke="#505050" stroke-width="0.7"/><path d="M754.5 118.2 l3.05 2.3 3.05 -2.3" fill="none" stroke="#505050" stroke-width="0.6"/><circle cx="761.0" cy="117.6" r="2.25" fill="#2b7de9"/>
<text x="761.00" y="118.80" font-size="3.4" fill="#fff" font-weight="bold" text-anchor="middle" >?</text>
<circle cx="757.8" cy="140.0" r="3.6" fill="#2277e8"/><path d="M755.8 137.6 q1.8 0 1.6 1.4 q-0.2 0.8 -1 1 q0.2 1.2 1.4 1.4 q0.8 0.8 0.2 1.8 M759.2 137.2 q-0.6 1.2 0.6 1.6 q1 0.2 1.4 -0.2" fill="none" stroke="#e6effc" stroke-width="0.9" stroke-linecap="round"/>
<path d="M756.2 160.3 h0.8 l0.7 -2.2 1.1 4.4 0.9 -3 0.5 0.8 h0.6" fill="none" stroke="#2277e8" stroke-width="0.85" stroke-linejoin="round"/><path d="M754.0 158.6 h2.0 M759.6 158.6 h2.1 M754.0 160.3 h1.6 M760.4 160.3 h1.3 M754.0 162.0 h2.4 M759.8 162.0 h1.9" stroke="#9a9a9a" stroke-width="0.6"/>
<rect x="755.20" y="177.6" width="5.6" height="6.6" rx="0.9" fill="#fff" stroke="#444" stroke-width="0.8"/><path d="M755.00 178.4 q-1.4 0.2 -1.4 1.4 v2.4 q0 1.2 1.4 1.4" fill="none" stroke="#1a73e8" stroke-width="1.3"/>
<line x1="751" y1="191.1" x2="764.2" y2="191.1" stroke="#e6e6e6" stroke-width="0.7"/>
<rect x="753.90" y="198.10" width="3.3" height="3.2" fill="#8c8c8c"/>
<rect x="753.90" y="201.80" width="3.3" height="3.2" fill="#8c8c8c"/>
<rect x="757.80" y="198.10" width="3.3" height="3.2" fill="#8c8c8c"/>
<rect x="757.80" y="201.80" width="3.3" height="3.2" fill="#8c8c8c"/>
<path d="M753.80 225.6 l2.6 -3.2 -1 -1 1.6 -0.4 1.4 -1.6 0.4 -1.2 3.2 3.2 -1.4 0.4 -1.4 1.4 -0.2 1.6 -1.2 -1 z" fill="#8a8a8a"/>
<path d="M753.20 242.6 q0.2 -2.2 2.4 -2.6 q1.6 -1 3.4 -0.6 q3.2 0.2 3.4 2.2 q0 1.6 -2.4 2 q-1.6 1.4 -3.4 1.2 q-3.2 0 -3.4 -2.2z" fill="#7c7c7c"/>
</svg>
</body></html>
